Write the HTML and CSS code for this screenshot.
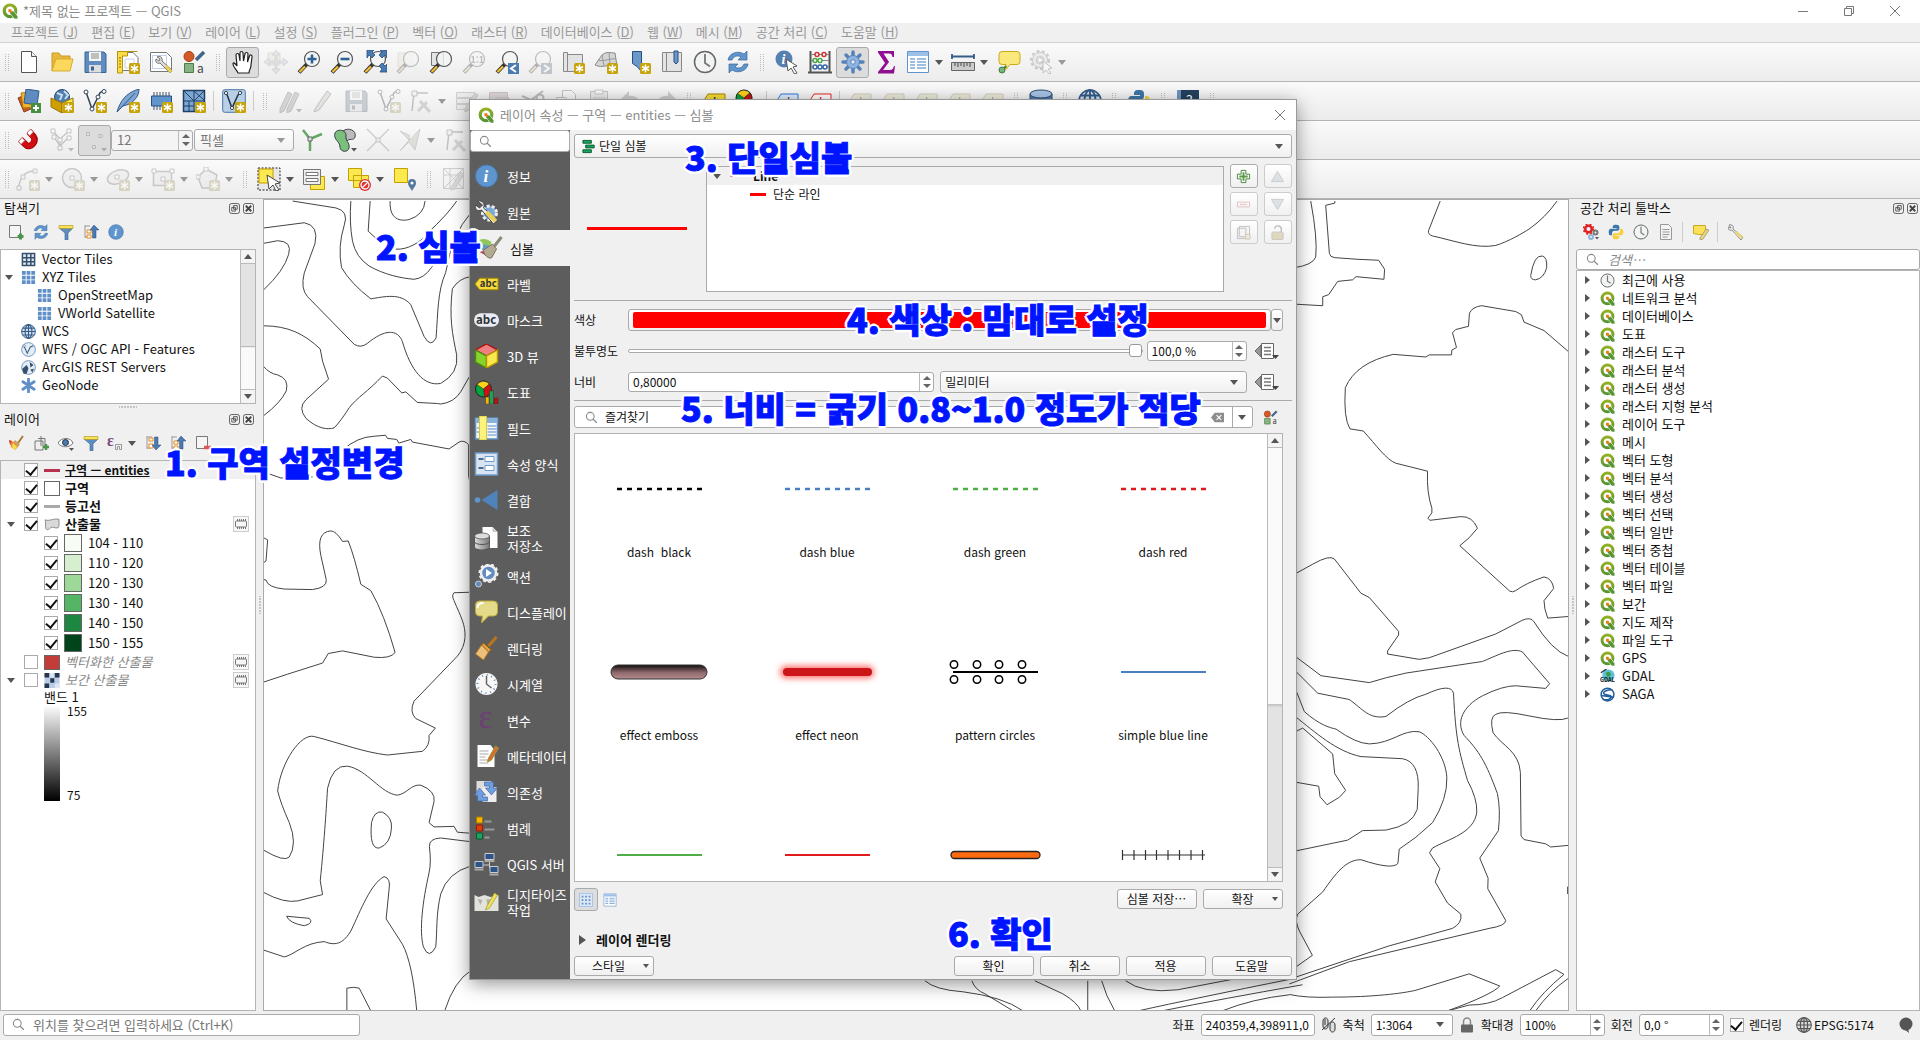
FILE: index.html
```html
<!DOCTYPE html>
<html lang="ko">

<head>
  <meta charset="UTF-8">
  <meta name="viewport" content="width=device-width, initial-scale=1.0">
  <title>*제목 없는 프로젝트 — QGIS</title>
  <link rel="stylesheet" href="styles.css">
</head>

<body>
  <!-- shared gradients and filters -->
  <svg class="defs" aria-hidden="true">
    <defs>
      <linearGradient id="g-q" x1="0" y1="0" x2="0" y2="1"><stop offset="0" stop-color="#93b023"/><stop offset="1" stop-color="#589632"/></linearGradient>
      <linearGradient id="g-emboss" x1="0" y1="0" x2="0" y2="1"><stop offset="0" stop-color="#150d0d"/><stop offset=".55" stop-color="#8f6b6e"/><stop offset="1" stop-color="#b58a8c"/></linearGradient>
      <linearGradient id="g-cyl" x1="0" y1="0" x2="1" y2="0"><stop offset="0" stop-color="#ddd"/><stop offset="1" stop-color="#777"/></linearGradient>
      <filter id="f-glow" x="-20%" y="-200%" width="140%" height="500%"><feGaussianBlur stdDeviation="3"/></filter>
    </defs>
  </svg>
  <!-- icon sprite -->
  <svg class="sprite" aria-hidden="true">
    <symbol id="qgis" viewBox="0 0 16 16"><circle cx="8" cy="7.8" r="5.8" fill="none" stroke="url(#g-q)" stroke-width="3.2"/><path d="M8 8h3.5l4.3 5.2V16h-3.2L8 10.500z" fill="#589632" stroke="#fff" stroke-width=".6"/><path d="M6.300 6.200h3l.5 3.300-3.200-.3z" fill="#ee7913"/></symbol>
    <symbol id="b-new" viewBox="0 0 24 24"><rect x="13" y="13" width="11" height="11" rx="1.500" fill="#c8a40c"/><path d="M18.500 14.500v8M15 16.500l7 4M22 16.500l-7 4" stroke="#fff" stroke-width="1.500"/></symbol>
    <symbol id="b-dd" viewBox="0 0 24 24"><path d="M18 20h6l-3 3.500z" fill="#555"/></symbol>
    <symbol id="mag" viewBox="0 0 24 24"><path d="M10 14l-8 8.500" stroke="#333" stroke-width="4"/><path d="M8 16.500l-5.500 5.500" stroke="#f7c22f" stroke-width="2.200"/><circle cx="15" cy="9" r="7.500" fill="#f3f5f5" fill-opacity=".8" stroke="#555" stroke-width="1.200"/></symbol>
    <symbol id="new" viewBox="0 0 24 24"><path d="M4.500 1.500h10l5 5v16h-15z" fill="#fff" stroke="#555"/><path d="M14.500 1.500v5h5" fill="#eee" stroke="#555"/></symbol>
    <symbol id="open" viewBox="0 0 24 24"><path d="M2 21V3h7l2 3h9v4" fill="#e6b83c" stroke="#c99b28"/><path d="M2 21l4-12h17l-3 12z" fill="#fbd85c" stroke="#d8ab32"/></symbol>
    <symbol id="save" viewBox="0 0 24 24"><path d="M2 2h19l2 2v18.500H2z" fill="#5f8cc0" stroke="#3b6493"/><path d="M6 2h12v9H6z" fill="#f6f6f6"/><path d="M8 4h8M8 6h8M8 8h8" stroke="#888"/><path d="M6 15h12v7.500H6z" fill="#ddd"/><path d="M8 16.500h3v4H8z" fill="#3b6493"/></symbol>
    <symbol id="layout" viewBox="0 0 24 24"><path d="M6 2.500h11l5 5v13H6z" fill="#fff" stroke="#777"/><path d="M1.500 1.500h20M1.500 1.500V23h5V6h5V1.500z" fill="#fadc4a" stroke="#b5920c"/><path d="M3 8h2M3 11h2M3 14h2M3 17h2" stroke="#8a6d00"/><path d="M9 9h9v9H9z" fill="#fff" stroke="#c3d0ea"/><use href="#b-new"/></symbol>
    <symbol id="layoutmgr" viewBox="0 0 24 24"><path d="M1.500 2.500h16l5 5v14h-21z" fill="#fff" stroke="#777"/><path d="M3.500 5.500h14v13h-14z" fill="none" stroke="#c3d0ea"/><path d="M8 7c3-2 6 1 5 4l10 9-2 3-10-10c-3 1-5-1-4-4l3 2 1-2z" fill="#ddd" stroke="#555" stroke-width=".8"/><path d="M17 16l5 6" stroke="#e8cf5a" stroke-width="3.500"/></symbol>
    <symbol id="style" viewBox="0 0 24 24"><circle cx="7" cy="6.500" r="5" fill="#d35a27" stroke="#a33c14"/><path d="M22 2l-8 8" stroke="#3f648f" stroke-width="3.500"/><path d="M2.500 13.500h9v9h-9z" fill="#86b286" stroke="#47803f"/><text x="15" y="22.500" font-size="12" fill="#444">a</text></symbol>
    <symbol id="hand" viewBox="0 0 24 24"><path d="M7 23c-1-3-5-6-5-9 0-2 2-1 4 2L5 5c0-2 3-2 3 0l1 6V3c0-2 3-2 3 0l.500 8L14 4c0-2 3-2 3 0l-.5 8L18.500 6c.5-2 3-1 2.500 1l-1 8c0 4-2 5-2 8z" fill="#fff" stroke="#222" stroke-width="1.200"/></symbol>
    <symbol id="pan" viewBox="0 0 24 24"><path d="M4 3h12v12H4z" fill="#efe1a2" stroke="#c7b36a"/><path d="M12 0l4 5h-3v6h6V8l5 4-5 4v-3h-6v6h3l-4 5-4-5h3v-6H5v3l-5-4 5-4v3h6V5H8z" fill="#bcc8d5" stroke="#8796a6" stroke-width=".8"/></symbol>
    <symbol id="zin" viewBox="0 0 24 24"><use href="#mag"/><path d="M15 4.500v9M10.500 9h9" stroke="#2f6194" stroke-width="2.600"/></symbol>
    <symbol id="zout" viewBox="0 0 24 24"><use href="#mag"/><path d="M10.500 9h9" stroke="#2f6194" stroke-width="2.600"/></symbol>
    <symbol id="zfull" viewBox="0 0 24 24"><use href="#mag"/><path d="M4 0h7L9 2l3 3-3 3-3-3-2 3zM24 0v8l-2-3-3 3-3-3 3-3-2-2zM24 22v-8l-2 2-3-3-3 3 3 3-2 3z" fill="#4b7ab3" stroke="#27507f" stroke-width=".8"/></symbol>
    <symbol id="zsel" viewBox="0 0 24 24"><path d="M2 3h14v14H2z" fill="#efe5a0" stroke="#bba"/><use href="#mag"/></symbol>
    <symbol id="zlay" viewBox="0 0 24 24"><path d="M2.500 2.500h12v13h-12z" fill="#e4e4e4" stroke="#777"/><use href="#mag"/></symbol>
    <symbol id="z11" viewBox="0 0 24 24"><use href="#mag"/><text x="8.500" y="12.500" font-size="9" font-weight="bold" fill="#555">1:1</text></symbol>
    <symbol id="zlast" viewBox="0 0 24 24"><use href="#mag"/><path d="M13 13h11v11H13z" fill="#4b7ab3"/><path d="M21 15l-5 3.500 5 3.500" fill="none" stroke="#fff" stroke-width="2"/></symbol>
    <symbol id="znext" viewBox="0 0 24 24"><use href="#mag"/><path d="M13 13h11v11H13z" fill="#4b7ab3"/><path d="M16 15l5 3.500-5 3.500" fill="none" stroke="#fff" stroke-width="2"/></symbol>
    <symbol id="newmap" viewBox="0 0 24 24"><path d="M2.500 2.500h4v19h-4zM6.500 4.500h15v17h-15z" fill="#e3e3e3" stroke="#888"/><use href="#b-new"/></symbol>
    <symbol id="new3d" viewBox="0 0 24 24"><path d="M1 15L8 5c5-4 8-2 13-2l2 13c-8-3-14 3-22-1z" fill="#d5d5d5" stroke="#888"/><path d="M8 5l2 11M15 3l1 12M4 10c6 2 12-2 18-1" fill="none" stroke="#999"/><use href="#b-new"/></symbol>
    <symbol id="bmnew" viewBox="0 0 24 24"><path d="M5.500 1.500h9v20l-4.500-5-4.500-3z" fill="#6b98cb" stroke="#27507f"/><use href="#b-new"/></symbol>
    <symbol id="bm" viewBox="0 0 24 24"><path d="M2.500 2.500h4v19h-4zM6.500 2.500h15v19h-15z" fill="#e3e3e3" stroke="#888"/><path d="M14 1h4v11l-2 2-2-2z" fill="#6b98cb" stroke="#27507f"/></symbol>
    <symbol id="clock" viewBox="0 0 24 24"><circle cx="12" cy="12" r="10.500" fill="#f2f4f4" stroke="#666" stroke-width="1.500"/><path d="M12 4v9l5 3.500" fill="none" stroke="#777" stroke-width="1.800"/></symbol>
    <symbol id="refresh" viewBox="0 0 24 24"><path d="M2 10C3 3 12 0 18 4l3-3v9h-9l3-3c-4-2-7-1-9 3zM22 14c-1 7-10 10-16 6l-3 3v-9h9l-3 3c4 2 7 1 9-3z" fill="#5f94cd" stroke="#37679b" stroke-width=".7"/></symbol>
    <symbol id="info" viewBox="0 0 24 24"><circle cx="12" cy="12" r="11" fill="#5f95cf" stroke="#4878ae"/><text x="9" y="17.500" font-size="17" font-style="italic" font-weight="bold" font-family="Liberation Serif" fill="#fff">i</text></symbol>
    <symbol id="ident" viewBox="0 0 24 24"><circle cx="9" cy="9" r="8.500" fill="#5580b0"/><text x="6.500" y="14" font-size="14" font-style="italic" font-weight="bold" font-family="Liberation Serif" fill="#fff">i</text><path d="M11 9l11 7-4 1 4 6-2.500 1-3.500-6-3 3z" fill="#fff" stroke="#555"/></symbol>
    <symbol id="abacus" viewBox="0 0 24 24"><path d="M2.500 1v21M21.500 1v21M0 22.500h24" stroke="#555" stroke-width="2"/><path d="M3 4.500h18M3 10.500h18M3 17h18" stroke="#888"/><g fill="#fff" stroke-width="1.500"><g stroke="#c33"><circle cx="9" cy="4.500" r="2"/><circle cx="16" cy="4.500" r="2"/></g><g stroke="#4a4"><circle cx="7" cy="10.500" r="2"/><circle cx="12" cy="10.500" r="2"/></g><g stroke="#36a"><circle cx="7" cy="17" r="2"/><circle cx="12" cy="17" r="2"/><circle cx="17" cy="17" r="2"/></g></g></symbol>
    <symbol id="gear" viewBox="0 0 24 24"><g stroke="#5583b9" stroke-width="3.500" stroke-linecap="round"><path d="M12 2v20M2 12h20M5 5l14 14M19 5L5 19"/></g><circle cx="12" cy="12" r="6.500" fill="#8db4e3" stroke="#5583b9"/><circle cx="12" cy="12" r="2.200" fill="#f2f2f2" stroke="#5583b9"/></symbol>
    <symbol id="sigma" viewBox="0 0 24 24"><path d="M4 1h16v6h-1.500C18 4 17 3.500 14 3.500H9.500L15 12 9 20h6c3 0 4-.5 5-4h1l-1 7.500H4V22l7-9L4 2.500z" fill="#900f90"/></symbol>
    <symbol id="table" viewBox="0 0 24 24"><path d="M1.500 1.500h21v21h-21z" fill="#fff" stroke="#5f94cd"/><path d="M2 2h20v4H2z" fill="#9dc0e8"/><path d="M4 9h5M4 12h5M4 15h5M4 18h5M11 9h9M11 12h9M11 15h9M11 18h9" stroke="#7fa8d6" stroke-width="1.500"/></symbol>
    <symbol id="ruler" viewBox="0 0 24 24"><path d="M1 6.500h22M1 4v5M23 4v5" stroke="#365c87" stroke-width="1.800"/><path d="M.5 12.500h23v8H.5z" fill="#ccc" stroke="#666"/><path d="M4 13v3M7 13v4M10 13v3M13 13v4M16 13v3M19 13v4" stroke="#444"/></symbol>
    <symbol id="tip" viewBox="0 0 24 24"><path d="M5 1.500h15q3 0 3 3v7q0 3-3 3h-7l-4 5v-5H5q-3 0-3-3v-7q0-3 3-3z" fill="#fbe87d" stroke="#c9ab1d"/><path d="M9 16l-5 6" stroke="#3d7f3d" stroke-width="2"/><circle cx="5" cy="20" r="3" fill="#7bb07b" stroke="#3d7f3d"/></symbol>
    <symbol id="action" viewBox="0 0 24 24"><circle cx="11" cy="10" r="9" fill="none" stroke="#777" stroke-width="2" stroke-dasharray="3 2.500"/><circle cx="11" cy="10" r="7.500" fill="#ddd" stroke="#777"/><circle cx="11" cy="10" r="4.500" fill="#999"/><path d="M9.500 7.500l4.500 2.500-4.500 2.500z" fill="#fff"/><path d="M14 11l9 7-4 1 3 4-2 1-3-4-3 3z" fill="#fff" stroke="#666"/></symbol>
    <symbol id="dsm" viewBox="0 0 24 24"><path d="M1 9l9-4 6 14-9 4z" fill="#c65a26" stroke="#8f3c12"/><path d="M4 4l11-1 2 15-11 1z" fill="#f2b42b" stroke="#ad7d10"/><path d="M9 0l13 2-2 14-13-2z" fill="#5f8cc0" stroke="#345b88"/><path d="M14 14h10v10H14z" fill="#47903f"/><path d="M19 16v6M16 19h6" stroke="#fff" stroke-width="2"/></symbol>
    <symbol id="gpkg" viewBox="0 0 24 24"><circle cx="12" cy="8" r="7.500" fill="#4f7db0" stroke="#28496e"/><path d="M7 4l5 2-2 5M14 2l4 4-3 4" fill="none" stroke="#cde" stroke-width="2"/><path d="M1 9l11 5v10L1 18z" fill="#cf9f00" stroke="#9a7500"/><path d="M23 9l-11 5v10l11-6z" fill="#fbe84d" stroke="#9a7500"/><use href="#b-new"/></symbol>
    <symbol id="shp" viewBox="0 0 24 24"><path d="M3 3l6 17L16 6q1-4 6-4" fill="none" stroke="#345" stroke-width="1.500"/><g fill="#fff" stroke="#345"><circle cx="3" cy="3" r="2"/><circle cx="9" cy="20" r="2"/><circle cx="15" cy="8" r="2"/><circle cx="21" cy="2.500" r="2"/></g></symbol>
    <symbol id="newshp" viewBox="0 0 24 24"><use href="#shp"/><use href="#b-new"/></symbol>
    <symbol id="allshp" viewBox="0 0 24 24"><path d="M3 3l7 8v10M10 11l9-8M4 9l6 9 9-9" fill="none" stroke="#666" stroke-width="1.200"/><g fill="#fff" stroke="#666"><path d="M1 1h4v4H1zM2 7h4v4H2zM8 10h4v4H8zM8 18h4v4H8zM17 1h4v4h-4zM17 8h4v4h-4z"/></g><use href="#b-dd"/></symbol>
    <symbol id="feather" viewBox="0 0 24 24"><path d="M1 23C4 13 9 4 23 0c0 8-6 15-16 17z" fill="#7da6d4" stroke="#345b88"/><path d="M1 23L19 4" stroke="#345b88"/><use href="#b-new"/></symbol>
    <symbol id="chip" viewBox="0 0 24 24"><path d="M5 3v18M8 3v18M11 3v18M14 3v18M17 3v18M20 3v18" stroke="#456"/><path d="M2.500 7h20v10h-20z" fill="#5f94cd" stroke="#27507f"/><use href="#b-new"/></symbol>
    <symbol id="mesh" viewBox="0 0 24 24"><path d="M1.500 1.500h21v21h-21z" fill="#7da6d4" stroke="#1f3f63" stroke-width="1.500"/><path d="M1 12h22M12 1v22M2 2l10 10L22 2M12 2l10 9M7 12v11M1 17h11" fill="none" stroke="#1f3f63"/><use href="#b-new"/></symbol>
    <symbol id="virt" viewBox="0 0 24 24"><rect x=".7" y=".7" width="22.600" height="22.600" rx="2" fill="#b8cfe8" stroke="#4a76a8"/><path d="M4 3l6 16 6-13 4-3" fill="none" stroke="#234" stroke-width="1.500"/><g fill="#fff" stroke="#345"><circle cx="4" cy="4" r="1.600"/><circle cx="10" cy="19" r="1.600"/><circle cx="18" cy="4" r="1.600"/></g><use href="#b-new"/></symbol>
    <symbol id="pencils" viewBox="0 0 24 24"><path d="M2 20l8-17 4 2-8 17-4 2zM9 20l8-17 4 2-8 17-4 2z" fill="#a89686" stroke="#666"/><use href="#b-dd"/></symbol>
    <symbol id="pencil" viewBox="0 0 24 24"><path d="M4 20L16 2l4 3L8 21l-5 2z" fill="#cfc5a5" stroke="#666"/></symbol>
    <symbol id="vtx" viewBox="0 0 24 24"><path d="M3 22L5 4h14" fill="none" stroke="#666" stroke-width="1.500"/><path d="M3 2h5v5H3z" fill="#eee" stroke="#666"/><path d="M9 22l9-9M11 12l10 11" stroke="#999" stroke-width="3"/></symbol>
    <symbol id="form" viewBox="0 0 24 24"><path d="M1.500 3.500h18v5h-18zM1.500 9.500h18v5h-18zM1.500 15.500h18v5h-18z" fill="#dbe5c4" stroke="#888"/><path d="M10 20L20 4l3 2-9 15-4 2z" fill="#b5a99a" stroke="#777"/></symbol>
    <symbol id="trash" viewBox="0 0 24 24"><path d="M1.500 3.500h18v14h-18z" fill="#d99" stroke="#a66"/><path d="M8 9h13l-1 14h-11z" fill="#c99" stroke="#966"/></symbol>
    <symbol id="cut" viewBox="0 0 24 24"><path d="M1 7l16 7M22 2L6 14" stroke="#555" stroke-width="2"/><circle cx="19" cy="9" r="3.500" fill="none" stroke="#555" stroke-width="2"/></symbol>
    <symbol id="copy" viewBox="0 0 24 24"><path d="M8.500 1.500h9l4 4v12h-13z" fill="#fff" stroke="#666"/><path d="M2.500 8.500h9l4 4v10h-13z" fill="#fff" stroke="#666"/></symbol>
    <symbol id="paste" viewBox="0 0 24 24"><path d="M3.500 2.500h17v20h-17z" fill="#ddd" stroke="#666"/><path d="M8 1h8v4H8zM7 9h11v12H7z" fill="#fff" stroke="#777"/></symbol>
    <symbol id="undo" viewBox="0 0 24 24"><path d="M9 2L1 10l8 8v-5c7-1 10 2 12 7 1-9-5-14-12-13z" fill="#888"/></symbol>
    <symbol id="tagy" viewBox="0 0 24 24"><path d="M1 13l5-8h17v16H6z" fill="#f7dd3a" stroke="#a58500"/><text x="6" y="16" font-size="9" font-weight="bold" fill="#333">abc</text></symbol>
    <symbol id="tagb" viewBox="0 0 24 24"><path d="M1 13l5-8h17v16H6z" fill="#dcebfb" stroke="#2d7be0"/><text x="7" y="16" font-size="9" font-weight="bold" fill="#555">ab</text></symbol>
    <symbol id="tagr" viewBox="0 0 24 24"><path d="M1 13l5-8h17v16H6z" fill="#fff" stroke="#e22"/><text x="6" y="16" font-size="9" font-weight="bold" fill="#e22">abc</text></symbol>
    <symbol id="diagram" viewBox="0 0 24 24"><circle cx="9" cy="9" r="8" fill="#00a63f" stroke="#222"/><path d="M9 9L2.500 4.500A8 8 0 0 1 15 4z" fill="#ffd21a" stroke="#333" stroke-width=".6"/><path d="M9 9l6-5a8 8 0 0 1-5 13z" fill="#c11" stroke="#333" stroke-width=".6"/><path d="M11 17h3.500v7H11z" fill="#f7b500" stroke="#333" stroke-width=".5"/><path d="M15 11h4v13h-4z" fill="#1fa055" stroke="#333" stroke-width=".5"/><path d="M19.500 18h4v6h-4z" fill="#b11" stroke="#333" stroke-width=".5"/></symbol>
    <symbol id="db" viewBox="0 0 24 24"><path d="M1 5v15c0 4 22 4 22 0V5z" fill="#4f7db0" stroke="#28496e"/><ellipse cx="12" cy="5" rx="11" ry="4" fill="#a8c5e6" stroke="#28496e"/></symbol>
    <symbol id="globe" viewBox="0 0 24 24"><circle cx="12" cy="12" r="11" fill="#cfdff0" stroke="#335a85" stroke-width="1.600"/><path d="M1 12h22M12 1v22M3 6.500h18M3 17.500h18" stroke="#335a85" stroke-width="1.800"/><ellipse cx="12" cy="12" rx="5.500" ry="11" fill="none" stroke="#335a85" stroke-width="1.800"/></symbol>
    <symbol id="python" viewBox="0 0 24 24"><path d="M12 1c-5 0-5 2-5 5h6v1H4c-4 0-4 10 0 10h2v-3c0-3 2-4 4-4h5c2 0 2-2 2-5 0-3-1-4-5-4z" fill="#3b77a8"/><path d="M12 23c5 0 5-2 5-5h-6v-1h9c4 0 4-10 0-10h-2v3c0 3-2 4-4 4H9c-2 0-2 2-2 5 0 3 1 4 5 4z" fill="#f7cf3f"/></symbol>
    <symbol id="help" viewBox="0 0 24 24"><path d="M1 1h5v22H1z" fill="#6f94c0"/><path d="M5 1h18v22H5z" fill="#24415f"/><text x="10" y="17" font-size="14" fill="#fff">?</text></symbol>
    <symbol id="magnet" viewBox="0 0 24 24"><path d="M3.500 11.500l5 5c4 5 12-3 8-8l-4.500-5" fill="none" stroke="#900" stroke-width="6.500"/><path d="M4 12l4.500 4.500c4 5 11.500-3 7.500-8L12 4" fill="none" stroke="#d00d12" stroke-width="5"/><path d="M1.500 13.500l3.500-4 3 3-4 4zM10 5l3.500-4 3 3-4 4z" fill="#fff" stroke="#a33" stroke-width=".7"/></symbol>
    <symbol id="dots3" viewBox="0 0 24 24"><path d="M3.500 4.500h3v3h-3zM16 6.500h3v3h-3zM9.500 17.500h3v3h-3z" fill="#eee" stroke="#777"/><use href="#b-dd"/></symbol>
    <symbol id="topo" viewBox="0 0 24 24"><path d="M3 2l7 9 12-5M10 11v12" fill="none" stroke="#63a863" stroke-width="2.500"/><path d="M8 9h4v4H8z" fill="#ddd" stroke="#666"/></symbol>
    <symbol id="snapx" viewBox="0 0 24 24"><path d="M10 3c5-4 14-1 12 6-1 4-6 1-8 4z" fill="#bbb" stroke="#444"/><path d="M2 5c2-5 12-3 11 3-1 5 4 6 3 12-1 5-9 4-9-1 0-6-7-7-5-14z" fill="#7cbf7c" stroke="#344"/><use href="#b-dd"/></symbol>
    <symbol id="cross" viewBox="0 0 24 24"><path d="M1 1l22 22M23 1L1 23" stroke="#888" stroke-width="1.500"/><path d="M10 10h4v4h-4z" fill="#ddd" stroke="#777"/></symbol>
    <symbol id="trace" viewBox="0 0 24 24"><path d="M2 23L11 12 2 3l9 4 1 5 10-11-5 21-6-8z" fill="#c9b68a" stroke="#888"/></symbol>
    <symbol id="curve" viewBox="0 0 24 24"><path d="M3 21C3 12 8 4 19 4" fill="none" stroke="#777" stroke-width="1.500"/><path d="M1 19h4v4H1zM5 8h4v4H5zM17 2h4v4h-4z" fill="#eee" stroke="#777"/><use href="#b-new"/></symbol>
    <symbol id="circ" viewBox="0 0 24 24"><circle cx="11" cy="11" r="9.500" fill="#dfe7df" stroke="#777" stroke-width="1.500"/><path d="M9 9h4v4H9z" fill="#fff" stroke="#777"/><use href="#b-new"/></symbol>
    <symbol id="ell" viewBox="0 0 24 24"><ellipse cx="12" cy="10" rx="11" ry="6.500" transform="rotate(-20 12 10)" fill="#dfe7df" stroke="#777" stroke-width="1.500"/><path d="M9 8h4v4H9z" fill="#fff" stroke="#777"/><use href="#b-new"/></symbol>
    <symbol id="rect" viewBox="0 0 24 24"><path d="M2.500 4.500h18v14h-18z" fill="#dfe7df" stroke="#777" stroke-width="1.500"/><path d="M1 2h4v4H1zM19 2h4v4h-4zM10 10h4v4h-4z" fill="#fff" stroke="#777"/><use href="#b-new"/></symbol>
    <symbol id="poly" viewBox="0 0 24 24"><path d="M10 2l11 6-3 13H6L2 10z" fill="#dfe7df" stroke="#777" stroke-width="1.500"/><path d="M8 0h4v4H8zM0 8h4v4H0z" fill="#fff" stroke="#777"/><use href="#b-new"/></symbol>
    <symbol id="select" viewBox="0 0 24 24"><path d="M1 1h22v22H1z" fill="#e8e8e8" stroke="#222" stroke-dasharray="2 1.500"/><path d="M2 2h14v14H2z" fill="#fce94f" stroke="#c4a000"/><path d="M10 8l13 8-5 1 4 6-3 1-3-6-4 4z" fill="#fff" stroke="#444"/></symbol>
    <symbol id="selform" viewBox="0 0 24 24"><path d="M8.500 9.500h14v13h-14z" fill="#fce94f" stroke="#c4a000"/><path d="M1.500 2.500h17v15h-17z" fill="#eee" stroke="#777"/><path d="M4 5.500h12v3H4zM4 11.500h12v3H4z" fill="#fff" stroke="#777"/></symbol>
    <symbol id="desel" viewBox="0 0 24 24"><path d="M1.500 1.500h13v12h-13zM6.500 8.500h15v12h-15z" fill="#fce94f" stroke="#c4a000"/><circle cx="18" cy="18" r="6" fill="#d33"/><circle cx="18" cy="18" r="4" fill="none" stroke="#fff" stroke-width="1.300"/><path d="M15 21l6-6" stroke="#fff" stroke-width="1.300"/></symbol>
    <symbol id="selloc" viewBox="0 0 24 24"><path d="M1.500 1.500h13v14h-13z" fill="#fce94f" stroke="#c4a000"/><path d="M19 24c-2-4-4-5-4-8a4 4 0 0 1 8 0c0 3-2 4-4 8z" fill="#527a9f"/><circle cx="19" cy="16" r="1.500" fill="#fff"/></symbol>
    <symbol id="georef" viewBox="0 0 24 24"><path d="M1.500 1.500h20v20h-20zM1.500 8h20M8 1.500v20M1.500 1.500l20 20M21 2L2 21" fill="none" stroke="#888"/><path d="M9 21L18 5l4 2-9 15-4 1z" fill="#c0a8a0" stroke="#888"/></symbol>
    <symbol id="search" viewBox="0 0 16 16"><circle cx="6.500" cy="6.500" r="4.800" fill="none" stroke="#888" stroke-width="1.300"/><path d="M10 10l4.500 4.500" stroke="#888" stroke-width="1.600"/></symbol>
    <symbol id="float" viewBox="0 0 12 12"><rect x=".5" y=".5" width="11" height="11" rx="2.500" fill="#eee" stroke="#555"/><path d="M5 2.800h4v4H5zM3 4.800h4v4H3z" fill="#eee" stroke="#555"/></symbol>
    <symbol id="close" viewBox="0 0 12 12"><rect x=".5" y=".5" width="11" height="11" rx="2.500" fill="#eee" stroke="#555"/><path d="M3 3l6 6M9 3l-6 6" stroke="#444" stroke-width="2"/></symbol>
    <symbol id="sq-add" viewBox="0 0 16 16"><path d="M1.500 1.500h11v12h-11z" fill="#f5f5f5" stroke="#777"/><path d="M12.500 9.500v6M9.500 12.500h6" stroke="#4c944c" stroke-width="3"/></symbol>
    <symbol id="sq-del" viewBox="0 0 16 16"><path d="M1.500 1.500h11v12h-11z" fill="#f5f5f5" stroke="#777"/><path d="M9 12.500h7" stroke="#d55" stroke-width="3.500"/></symbol>
    <symbol id="funnel" viewBox="0 0 16 16"><path d="M1 4h14L10 9v7H7V9z" fill="#5f8cc0" stroke="#3b6493" stroke-width=".6"/><path d="M1 1.500h14v3H1z" fill="#fbe15a" stroke="#ad9313" stroke-width=".6"/></symbol>
    <symbol id="collapse" viewBox="0 0 16 16"><path d="M2 1v13M2 2h5M2 13h4" stroke="#999" fill="none"/><path d="M4 6h4v3H4zM4 11h4v3H4z" fill="#fff" stroke="#e88a1b"/><path d="M11 1l5 5h-3v8H9.500V6H7z" fill="#4b7ab3" stroke="#27507f" stroke-width=".5"/></symbol>
    <symbol id="expand" viewBox="0 0 16 16"><path d="M2 1v13M2 2h5M2 13h4" stroke="#999" fill="none"/><path d="M4 3h4v3H4zM4 9h4v4H4z" fill="#fff" stroke="#e88a1b"/><path d="M11 15l5-5h-3V2H9.500v8H7z" fill="#4b7ab3" stroke="#27507f" stroke-width=".5"/></symbol>
    <symbol id="brushc" viewBox="0 0 16 16"><path d="M10 8l5-7" stroke="#a87c3c" stroke-width="2"/><path d="M7 5l5 4-2 3-5-4z" fill="#c9a063"/><path d="M1 5l5 2 4 5-3 3-4-3z" fill="#e8913a"/><path d="M1 5l3 1-2 4z" fill="#d23c3c"/><path d="M5 8l4 4-2 3-3-3z" fill="#f7de4d"/></symbol>
    <symbol id="group" viewBox="0 0 16 16"><path d="M2 6h8v9H2zM5 3.500h7v9" fill="#eee" stroke="#777"/><path d="M8 1v10" stroke="#777"/><path d="M13 9v6M10 12h6" stroke="#4c944c" stroke-width="2.500"/></symbol>
    <symbol id="eye" viewBox="0 0 16 16"><path d="M0 8c3-6 13-6 15 0-3 5-12 5-15 0z" fill="#fff" stroke="#777"/><circle cx="7.500" cy="7.500" r="3" fill="#4b7ab3" stroke="#234"/><path d="M11 13h5l-2.500 3z" fill="#555"/></symbol>
    <symbol id="eps" viewBox="0 0 16 16"><text x="0" y="11" font-size="16" font-weight="bold" font-family="Liberation Serif" fill="#7d4b82">ε</text><path d="M8.500 9.500h6v5M8.500 9.500v5h2v-3h2v3h2" fill="none" stroke="#999"/></symbol>
    <symbol id="grid" viewBox="0 0 16 16"><path d="M1 1h4v4H1zM6 1h4v4H6zM11 1h4v4h-4zM1 6h4v4H1zM6 6h4v4H6zM11 6h4v4h-4zM1 11h4v4H1zM6 11h4v4H6zM11 11h4v4h-4z" fill="#5f8fc6"/></symbol>
    <symbol id="gridview" viewBox="0 0 16 16"><path d="M.5.500h15v15H.5z" fill="#dce8f5" stroke="#9dc0e8"/><path d="M3 3h2v2H3zM7 3h2v2H7zM11 3h2v2h-2zM3 7h2v2H3zM7 7h2v2H7zM11 7h2v2h-2zM3 11h2v2H3zM7 11h2v2H7zM11 11h2v2h-2z" fill="#5f8fc6"/></symbol>
    <symbol id="vgrid" viewBox="0 0 16 16"><path d="M1.500 1.500h13v13h-13zM6 1v14M10.500 1v14M1 6h14M1 10.500h14" fill="#dfe8f2" stroke="#36506e" stroke-width="1.600"/></symbol>
    <symbol id="wfs" viewBox="0 0 24 24"><circle cx="12" cy="12" r="11" fill="#e3edf7" stroke="#6f93bb" stroke-width="1.500"/><path d="M5 7l5 11 5-10 5-2" fill="none" stroke="#44607e" stroke-width="1.800"/><circle cx="5" cy="6" r="2" fill="#fff" stroke="#44607e"/></symbol>
    <symbol id="arc" viewBox="0 0 24 24"><circle cx="12" cy="12" r="11" fill="#e3edf7" stroke="#6f93bb" stroke-width="1.500"/><path d="M2 14l7-6 3 5-3 9H4zM14 3l6 5-5 4zM15 15l6-1-3 6z" fill="#37506d"/></symbol>
    <symbol id="node" viewBox="0 0 16 16"><path d="M8 1v14M2 4l12 8M14 4L2 12" stroke="#5f8fc6" stroke-width="3" stroke-linecap="round"/></symbol>
    <symbol id="mem" viewBox="0 0 16 16"><rect x=".5" y=".5" width="15" height="15" fill="#f7f7f7" stroke="#ccc"/><path d="M4.500 3v10M6.500 3v10M8.500 3v10M10.500 3v10M12.500 3v10" stroke="#777"/><rect x="2.500" y="5" width="11" height="6" rx="1" fill="#f7f7f7" stroke="#777"/></symbol>
    <symbol id="polyg" viewBox="0 0 16 16"><path d="M.5 3C5 5 10 1 15.500 2.500c-.5 4 1 7-1 9-4 1-5-2-8 0-2 2-4 3-5 1C.5 9 2 6 .5 3z" fill="#d9d9d9" stroke="#888"/></symbol>
    <symbol id="raster" viewBox="0 0 13 13"><path d="M0 0h13v13H0z" fill="#b9cde6"/><path d="M0 0h4v4H0zM9 0h4v4H9zM5 4.500h3.500v4H5zM0 9h4v4H0z" fill="#26364d"/><path d="M5 0h3v4H5zM9 9h4v4H9z" fill="#dfe8f4"/></symbol>
    <symbol id="tree1" viewBox="0 0 14 16"><path d="M.5 1.500h9v3h-9zM3.500 6.500h9v3h-9zM.5 11.500h9v3h-9z" fill="#19a55c" stroke="#0b5a31"/></symbol>
    <symbol id="plus" viewBox="0 0 16 16"><path d="M5.500 1.500h5v4h4v5h-4v4h-5v-4h-4v-5h4z" fill="#fff" stroke="#4a7f3c"/><path d="M8 3.500v9M3.500 8h9" stroke="#5c9a4b" stroke-width="2"/></symbol>
    <symbol id="minus" viewBox="0 0 16 16"><path d="M1.500 5.500h13v5h-13z" fill="#fff" stroke="#c99"/><path d="M4 8h8" stroke="#daa" stroke-width="1.500"/></symbol>
    <symbol id="up" viewBox="0 0 16 16"><path d="M8 2.500l6.500 11h-13z" fill="#cdd3d9" stroke="#a9b0b8"/></symbol>
    <symbol id="down" viewBox="0 0 16 16"><path d="M8 13.500l6.500-11h-13z" fill="#cdd3d9" stroke="#a9b0b8"/></symbol>
    <symbol id="dup" viewBox="0 0 16 16"><path d="M1.500 3.500h9v11h-9zM3.500 1.500h11v11h-11z" fill="#f2f2f2" stroke="#999"/><path d="M10 10h5v5h-5z" fill="#e8e0c4" stroke="#b9b089"/></symbol>
    <symbol id="lock" viewBox="0 0 16 16"><path d="M4.500 8V4.500a3.500 3.500 0 0 1 7 0V8" fill="none" stroke="#888" stroke-width="1.500"/><rect x="2" y="7.500" width="12" height="8" rx="1" fill="#666"/></symbol>
    <symbol id="unlock" viewBox="0 0 16 16"><path d="M5 4a3.500 3.500 0 0 1 7 1v3" fill="none" stroke="#999" stroke-width="1.500"/><rect x="2" y="7.500" width="12" height="8" rx="1" fill="#d1c69c" stroke="#aaa"/></symbol>
    <symbol id="ddef" viewBox="0 0 24 18"><path d="M6 3L0 9l6 6z" fill="#999" stroke="#666"/><path d="M6.500 1.500h12v15h-12z" fill="#fff" stroke="#666"/><path d="M9 5.500h7M9 9h7M9 12.500h7" stroke="#777" stroke-width="1.500"/><path d="M17 13h7l-3.500 4z" fill="#444"/></symbol>
    <symbol id="erase" viewBox="0 0 14 12"><path d="M4 1h10v10H4L0 6z" fill="#8d8d8d"/><path d="M6 3.500l5 5M11 3.500l-5 5" stroke="#fff" stroke-width="1.300"/></symbol>
    <symbol id="wrench" viewBox="0 0 24 24"><circle cx="15" cy="13" r="7" fill="#7ba7da" stroke="#eee" stroke-width="3" stroke-dasharray="3 2"/><path d="M3 1c5-1 8 3 6 7l14 12-4 4L7 10C3 12 0 9 1 5l4 3 3-3z" fill="#eee" stroke="#444"/><path d="M12 12l9 9" stroke="#e8cf5a" stroke-width="4.500"/></symbol>
    <symbol id="tools" viewBox="0 0 16 16"><path d="M1 1c3-1 5 1 4 4l10 8-2 3L4 6C2 7 0 6 0 3l3 1z" fill="#eee" stroke="#777" stroke-width=".8"/><path d="M8 8l6 6" stroke="#ecd97a" stroke-width="3"/></symbol>
    <symbol id="paint" viewBox="0 0 24 24"><path d="M1 4q6-3 12 2l-3 8z" fill="#8fc75a"/><path d="M1 7l10 3-5 9z" fill="#5a9bd5"/><path d="M1 16l9-2 2 8z" fill="#c7365f"/><path d="M5 14l9-6 4 5-5 9c-3 1-8-3-8-8z" fill="#b3ab94" stroke="#7b745f"/><path d="M16 10l7-9" stroke="#8a8a76" stroke-width="3"/></symbol>
    <symbol id="mask" viewBox="0 0 26 16"><rect x="0" y="1" width="26" height="14" rx="7" fill="#e8ecf7"/><text x="2" y="12" font-size="12" font-weight="bold" fill="#333">abc</text></symbol>
    <symbol id="label" viewBox="0 0 26 16"><path d="M1 8l5-6h19v12H6z" fill="#f7dd3a" stroke="#a58500"/><text x="6" y="11.500" font-size="10" font-weight="bold" fill="#333">abc</text></symbol>
    <symbol id="cube" viewBox="0 0 24 24"><path d="M12 0l11 6-11 6L1 6z" fill="#f08080" stroke="#a11" stroke-width="1.400"/><path d="M1 6l11 6v12L1 18z" fill="#84d42c" stroke="#4c8a10" stroke-width="1.400"/><path d="M23 6l-11 6v12l11-6z" fill="#fbe84d" stroke="#b59500" stroke-width="1.400"/></symbol>
    <symbol id="fields" viewBox="0 0 24 24"><path d="M1 2h22v21H1z" fill="#f2f5f9" stroke="#5f8cc0" stroke-width="1.500"/><path d="M1 2h22v5H1z" fill="#8ab0dc"/><path d="M13 10h9M13 13h9M13 16h9M13 19h9M2 12h3M2 16h3" stroke="#8ab0dc" stroke-width="1.500"/><path d="M5 0h7v24H5z" fill="#fdf27c" stroke="#d8c830"/></symbol>
    <symbol id="aform" viewBox="0 0 24 24"><path d="M1 1h22v22H1z" fill="#d8e4f1" stroke="#6f9acb" stroke-width="1.500"/><path d="M10.500 4.500h9v5h-9zM10.500 13.500h9v5h-9z" fill="#fff" stroke="#6f9acb"/><path d="M4 7h5M4 16h5" stroke="#4b6a8e" stroke-width="2"/></symbol>
    <symbol id="join" viewBox="0 0 24 24"><circle cx="3" cy="12" r="2.800" fill="#5f94cd"/><path d="M23 2v20L7 12z" fill="#4f83bb"/></symbol>
    <symbol id="aux" viewBox="0 0 24 24"><path d="M8 1h10l5 5v16H8z" fill="#fff"/><path d="M18 1v5h5" fill="#ccc"/><path d="M0 10v11c0 4 15 4 15 0V10z" fill="url(#g-cyl)" stroke="#444" stroke-width=".8"/><ellipse cx="7.500" cy="10" rx="7.500" ry="3" fill="#ddd" stroke="#555" stroke-width=".8"/><path d="M0 15.500c0 4 15 4 15 0" fill="none" stroke="#555"/></symbol>
    <symbol id="act" viewBox="0 0 24 24"><circle cx="14" cy="9" r="7.500" fill="#5f8cc0" stroke="#eee" stroke-width="2.500"/><circle cx="14" cy="9" r="9" fill="none" stroke="#eee" stroke-width="2" stroke-dasharray="3 2.600"/><path d="M11.500 5l6 4-6 4z" fill="#fff"/><circle cx="4" cy="20" r="3" fill="#5f8cc0" stroke="#ccc"/></symbol>
    <symbol id="bubble" viewBox="0 0 24 24"><path d="M5 1h14q4 0 4 4v7q0 4-4 4h-5l-7 7 1-7H5q-4 0-4-4V5q0-4 4-4z" fill="#e5d98a" stroke="#bda93a"/><path d="M3 8q0-5 6-5" fill="none" stroke="#fff" stroke-width="1.800"/></symbol>
    <symbol id="broom" viewBox="0 0 24 24"><path d="M14 10l8-9" stroke="#b8761c" stroke-width="3"/><path d="M9 7l8 7-3 2-7-7z" fill="#e4a43d" stroke="#8a5510"/><path d="M7 9l7 7-5 8-8-6z" fill="#ebc07c" stroke="#b8761c"/></symbol>
    <symbol id="wclock" viewBox="0 0 24 24"><circle cx="12" cy="12" r="11" fill="#f7f7f7"/><circle cx="12" cy="12" r="9" fill="none" stroke="#6a90b8" stroke-dasharray="1 3.700" stroke-width="2"/><path d="M12 4v8l5 4" fill="none" stroke="#666" stroke-width="1.500"/></symbol>
    <symbol id="var" viewBox="0 0 24 24"><text x="4" y="20" font-size="34" font-family="Liberation Serif" fill="#6d3f77">ε</text></symbol>
    <symbol id="meta" viewBox="0 0 24 24"><path d="M3 1h13l4 5v17H3z" fill="#fff"/><path d="M5 7h9M5 10h9M5 13h6M5 16h9M5 19h9" stroke="#aaa"/><path d="M14 14l7-12 3 2-7 12-4 2z" fill="#dd6a2f" stroke="#993"/></symbol>
    <symbol id="deps" viewBox="0 0 24 24"><path d="M2 1h15v15H2z" fill="#ddd"/><path d="M8 7h14v15H8z" fill="#eee"/><path d="M10 2h9v6h4l-6 7-6-7h4V6h-5z" fill="#6f9de0" stroke="#3d68a8" stroke-width=".7"/><path d="M13 21H3v-6H0l5-7 6 7H8v2h5z" fill="#6f9de0" stroke="#3d68a8" stroke-width=".7"/></symbol>
    <symbol id="legend" viewBox="0 0 24 24"><path d="M2 1h6v6H2z" fill="#f7b500" stroke="#a57800"/><path d="M2 9h6v6H2z" fill="#e0390b" stroke="#8f2206"/><path d="M2 17h6v6H2z" fill="#19a55c" stroke="#0b5a31"/><path d="M10 5.500h7M10 13.500h10M10 21.500h5" stroke="#999" stroke-width="2"/></symbol>
    <symbol id="server" viewBox="0 0 24 24"><g fill="#2c5488" stroke="#ccc"><path d="M10.500 1.500h9v6h-9zM.5 9.500h8v6h-8zM15.500 14.500h8v6h-8z"/></g><path d="M15 8v8M9 13h6" stroke="#ccc"/><path d="M10 9h10M0 17.500h9M15 22.500h9" stroke="#aaa" stroke-width="2"/></symbol>
    <symbol id="digit" viewBox="0 0 24 24"><path d="M0 5l4 2 6-2 6 2 8-2v16H0z" fill="#e3e3de"/><path d="M3 9l5 1-2 5zM12 9l7 1-2 4-4 5z" fill="#b3b3a8"/><path d="M12 17L20 3l3 2-8 13-4 2z" fill="#f1e05a" stroke="#a89a2a" stroke-width=".7"/></symbol>
    <symbol id="gears" viewBox="0 0 16 16"><circle cx="5.500" cy="5" r="3.300" fill="none" stroke="#d22" stroke-width="2.500"/><circle cx="5.500" cy="5" r="5" fill="none" stroke="#d22" stroke-width="1.500" stroke-dasharray="2 2"/><circle cx="12.500" cy="8.500" r="2" fill="none" stroke="#777" stroke-width="2"/><circle cx="8" cy="13" r="2" fill="none" stroke="#8fb3dd" stroke-width="2"/><path d="M12 13h4l-2 2.500z" fill="#555"/></symbol>
    <symbol id="doc" viewBox="0 0 16 16"><path d="M2.500.5h8l3 3v12h-11z" fill="#f3f3f3" stroke="#999"/><path d="M4.500 5.500h7M4.500 8h7M4.500 10.500h7M4.500 13h5" stroke="#999"/></symbol>
    <symbol id="note" viewBox="0 0 16 16"><path d="M.5 1.500h12v9h-7l-5-1z" fill="#fbe15a" stroke="#c9ab1d"/><path d="M7 14l6-9 3 1-6 9-3 1z" fill="#f1d56a" stroke="#888" stroke-width=".7"/></symbol>
    <symbol id="gdal" viewBox="0 0 16 16"><circle cx="9" cy="7" r="6.500" fill="#5ac1d8"/><path d="M6 4l4-1 2 3-4 3z" fill="#3e9a3e"/><path d="M1 4l6-4" stroke="#333" stroke-width="1.500"/><text x="0" y="14" font-size="6" font-weight="bold" fill="#111">GDAL</text></symbol>
    <symbol id="saga" viewBox="0 0 16 16"><circle cx="8" cy="8" r="6.800" fill="#fff" stroke="#1f5d9c" stroke-width="1.600"/><path d="M13 3C7 3 3 5 4 7s9 1 8 4-6 3-9 2M1 9l14 2" fill="none" stroke="#1f5d9c" stroke-width="1.600"/></symbol>
    <symbol id="extent" viewBox="0 0 16 16"><path d="M2 4c0-4 5-4 5 0v5c0 4-5 4-5 0zM9 8c0-4 5-4 5 0v4c0 4-5 4-5 0z" fill="#ddd" stroke="#333"/><path d="M1 13L14 1M4 2v6" stroke="#333"/></symbol>
    <symbol id="msg" viewBox="0 0 16 16"><circle cx="8" cy="7" r="6.500" fill="#555"/><path d="M6 12l5 4-1-5z" fill="#555"/></symbol>
  </svg>

  <header class="titlebar">
    <svg class="i16"><use href="#qgis"/></svg>
    <h1>*제목 없는 프로젝트 — QGIS</h1>
    <div class="winbtns">
      <button aria-label="최소화"><svg viewBox="0 0 10 10"><path d="M0 5.500h10"/></svg></button>
      <button aria-label="이전 크기로"><svg viewBox="0 0 10 10"><path d="M.5 2.500h7v7h-7zM2.500 2.500v-2h7v7h-2"/></svg></button>
      <button aria-label="닫기"><svg viewBox="0 0 10 10"><path d="M0 0l10 10M10 0L0 10"/></svg></button>
    </div>
  </header>

  <nav class="menubar">
    <a href="#">프로젝트 (<u>J</u>)</a><a href="#">편집 (<u>E</u>)</a><a href="#">보기 (<u>V</u>)</a><a href="#">레이어 (<u>L</u>)</a><a href="#">설정 (<u>S</u>)</a><a href="#">플러그인 (<u>P</u>)</a><a href="#">벡터 (<u>O</u>)</a><a href="#">래스터 (<u>R</u>)</a><a href="#">데이터베이스 (<u>D</u>)</a><a href="#">웹 (<u>W</u>)</a><a href="#">메시 (<u>M</u>)</a><a href="#">공간 처리 (<u>C</u>)</a><a href="#">도움말 (<u>H</u>)</a>
  </nav>

  <div class="toolbar">
    <i class="grip"></i>
    <button aria-label="새 프로젝트"><svg><use href="#new"/></svg></button>
    <button aria-label="열기"><svg><use href="#open"/></svg></button>
    <button aria-label="저장"><svg><use href="#save"/></svg></button>
    <button aria-label="새 인쇄 조판"><svg><use href="#layout"/></svg></button>
    <button aria-label="조판 관리자"><svg><use href="#layoutmgr"/></svg></button>
    <button aria-label="스타일 관리자"><svg><use href="#style"/></svg></button>
    <i class="grip"></i>
    <button class="on" aria-label="지도 이동"><svg><use href="#hand"/></svg></button>
    <button disabled aria-label="선택으로 이동"><svg><use href="#pan"/></svg></button>
    <button aria-label="확대"><svg><use href="#zin"/></svg></button>
    <button aria-label="축소"><svg><use href="#zout"/></svg></button>
    <button aria-label="전체 보기"><svg><use href="#zfull"/></svg></button>
    <button disabled aria-label="선택으로 확대"><svg><use href="#zsel"/></svg></button>
    <button aria-label="레이어로 확대"><svg><use href="#zlay"/></svg></button>
    <button disabled aria-label="원해상도"><svg><use href="#z11"/></svg></button>
    <button aria-label="이전 영역"><svg><use href="#zlast"/></svg></button>
    <button disabled aria-label="다음 영역"><svg><use href="#znext"/></svg></button>
    <button aria-label="새 지도 뷰"><svg><use href="#newmap"/></svg></button>
    <button aria-label="새 3D 뷰"><svg><use href="#new3d"/></svg></button>
    <button aria-label="새 북마크"><svg><use href="#bmnew"/></svg></button>
    <button aria-label="북마크"><svg><use href="#bm"/></svg></button>
    <button aria-label="시간 제어기"><svg><use href="#clock"/></svg></button>
    <button aria-label="새로고침"><svg><use href="#refresh"/></svg></button>
    <i class="grip"></i>
    <button aria-label="객체 식별"><svg><use href="#ident"/></svg></button>
    <button aria-label="필드 계산기"><svg><use href="#abacus"/></svg></button>
    <button class="on" aria-label="툴박스"><svg><use href="#gear"/></svg></button>
    <button aria-label="통계"><svg><use href="#sigma"/></svg></button>
    <button class="drop" aria-label="속성 테이블"><svg><use href="#table"/></svg></button>
    <button class="drop" aria-label="측정"><svg><use href="#ruler"/></svg></button>
    <button aria-label="맵 도움말"><svg><use href="#tip"/></svg></button>
    <button class="drop" disabled aria-label="액션 실행"><svg><use href="#action"/></svg></button>
  </div>

  <div class="toolbar">
    <i class="grip"></i>
    <button aria-label="데이터 소스 관리자"><svg><use href="#dsm"/></svg></button>
    <button aria-label="새 지오패키지"><svg><use href="#gpkg"/></svg></button>
    <button aria-label="새 셰이프파일"><svg><use href="#newshp"/></svg></button>
    <button aria-label="새 SpatiaLite"><svg><use href="#feather"/></svg></button>
    <button aria-label="새 임시 레이어"><svg><use href="#chip"/></svg></button>
    <button aria-label="새 메시"><svg><use href="#mesh"/></svg></button>
    <i class="sep"></i>
    <button aria-label="새 가상 레이어"><svg><use href="#virt"/></svg></button>
    <i class="sep"></i><i class="grip"></i>
    <button disabled aria-label="현재 편집"><svg><use href="#pencils"/></svg></button>
    <button disabled aria-label="편집 모드"><svg><use href="#pencil"/></svg></button>
    <button disabled aria-label="편집 저장"><svg><use href="#save"/></svg></button>
    <button disabled aria-label="객체 추가"><svg><use href="#newshp"/></svg></button>
    <button class="drop" disabled aria-label="꼭짓점 도구"><svg><use href="#vtx"/></svg></button>
    <button disabled aria-label="속성 수정"><svg><use href="#form"/></svg></button>
    <button disabled aria-label="삭제"><svg><use href="#trash"/></svg></button>
    <button disabled aria-label="잘라내기"><svg><use href="#cut"/></svg></button>
    <button disabled aria-label="복사"><svg><use href="#copy"/></svg></button>
    <button disabled aria-label="붙여넣기"><svg><use href="#paste"/></svg></button>
    <button disabled aria-label="실행 취소"><svg><use href="#undo"/></svg></button>
    <button disabled class="flip" aria-label="다시 실행"><svg><use href="#undo"/></svg></button>
    <i class="grip"></i>
    <button aria-label="라벨 옵션"><svg><use href="#tagy"/></svg></button>
    <button aria-label="도표 옵션"><svg><use href="#diagram"/></svg></button>
    <i class="sep"></i>
    <button aria-label="고정 라벨"><svg><use href="#tagb"/></svg></button>
    <button aria-label="미배치 라벨"><svg><use href="#tagr"/></svg></button>
    <i class="sep"></i>
    <button disabled aria-label="라벨 고정"><svg><use href="#tagy"/></svg></button>
    <button disabled aria-label="라벨 표시"><svg><use href="#tagy"/></svg></button>
    <button disabled aria-label="라벨 이동"><svg><use href="#tagy"/></svg></button>
    <button disabled aria-label="라벨 회전"><svg><use href="#tagy"/></svg></button>
    <button disabled aria-label="라벨 변경"><svg><use href="#tagy"/></svg></button>
    <i class="grip"></i>
    <button aria-label="DB 관리자"><svg><use href="#db"/></svg></button>
    <i class="grip"></i>
    <button aria-label="메타서치"><svg><use href="#globe"/></svg></button>
    <i class="grip"></i>
    <button aria-label="파이썬 콘솔"><svg><use href="#python"/></svg></button>
    <i class="grip"></i>
    <button aria-label="도움말"><svg><use href="#help"/></svg></button>
    <i class="grip"></i>
  </div>

  <div class="toolbar">
    <i class="grip"></i>
    <button aria-label="스냅 켜기"><svg><use href="#magnet"/></svg></button>
    <button disabled aria-label="모든 레이어"><svg><use href="#allshp"/></svg></button>
    <button class="on" disabled aria-label="꼭짓점"><svg><use href="#dots3"/></svg></button>
    <div class="spin snap-tol"><input type="text" value="12" aria-label="허용 오차" disabled><i class="steps"></i></div>
    <div class="combo snap-unit"><select aria-label="단위" disabled><option>픽셀</option></select></div>
    <button aria-label="위상 편집"><svg><use href="#topo"/></svg></button>
    <button aria-label="중첩 허용"><svg><use href="#snapx"/></svg></button>
    <button disabled aria-label="교차점 스냅"><svg><use href="#cross"/></svg></button>
    <button class="drop" disabled aria-label="추적"><svg><use href="#trace"/></svg></button>
    <button disabled aria-label="자체 스냅"><svg><use href="#vtx"/></svg></button>
  </div>

  <div class="toolbar">
    <i class="grip"></i>
    <button class="drop" disabled aria-label="원호 문자열"><svg><use href="#curve"/></svg></button>
    <button class="drop" disabled aria-label="원"><svg><use href="#circ"/></svg></button>
    <button class="drop" disabled aria-label="타원"><svg><use href="#ell"/></svg></button>
    <button class="drop" disabled aria-label="직사각형"><svg><use href="#rect"/></svg></button>
    <button class="drop" disabled aria-label="정다각형"><svg><use href="#poly"/></svg></button>
    <i class="grip"></i>
    <button class="drop" aria-label="객체 선택"><svg><use href="#select"/></svg></button>
    <button class="drop" aria-label="값으로 선택"><svg><use href="#selform"/></svg></button>
    <button class="drop" aria-label="선택 해제"><svg><use href="#desel"/></svg></button>
    <button aria-label="위치로 선택"><svg><use href="#selloc"/></svg></button>
    <i class="grip"></i>
    <button disabled aria-label="고급 디지타이즈"><svg><use href="#georef"/></svg></button>
  </div>

  <main class="workspace">
    <div class="left">
      <section class="dock browser">
        <header><h2>탐색기</h2><button aria-label="띄우기"><svg><use href="#float"/></svg></button><button aria-label="닫기"><svg><use href="#close"/></svg></button></header>
        <div class="dockbar">
          <button aria-label="레이어 추가"><svg><use href="#sq-add"/></svg></button>
          <button aria-label="새로고침"><svg><use href="#refresh"/></svg></button>
          <button aria-label="필터"><svg><use href="#funnel"/></svg></button>
          <button aria-label="모두 접기"><svg><use href="#collapse"/></svg></button>
          <button aria-label="정보"><svg><use href="#info"/></svg></button>
        </div>
        <div class="box">
          <ul class="tree">
            <li><i></i><svg><use href="#vgrid"/></svg>Vector Tiles</li>
            <li><i class="tri open"></i><svg><use href="#grid"/></svg>XYZ Tiles</li>
            <li class="child"><i></i><svg><use href="#grid"/></svg>OpenStreetMap</li>
            <li class="child"><i></i><svg><use href="#grid"/></svg>VWorld Satellite</li>
            <li><i></i><svg><use href="#globe"/></svg>WCS</li>
            <li><i></i><svg><use href="#wfs"/></svg>WFS / OGC API - Features</li>
            <li><i></i><svg><use href="#arc"/></svg>ArcGIS REST Servers</li>
            <li><i></i><svg><use href="#node"/></svg>GeoNode</li>
          </ul>
          <div class="scroll low"><i class="tri up"></i><b></b><i class="tri open"></i></div>
        </div>
      </section>
      <i class="hgrip"></i>
      <section class="dock layers">
        <header><h2>레이어</h2><button aria-label="띄우기"><svg><use href="#float"/></svg></button><button aria-label="닫기"><svg><use href="#close"/></svg></button></header>
        <div class="dockbar">
          <button aria-label="스타일"><svg><use href="#brushc"/></svg></button>
          <button aria-label="그룹 추가"><svg><use href="#group"/></svg></button>
          <button aria-label="보기 관리"><svg><use href="#eye"/></svg></button>
          <button aria-label="필터"><svg><use href="#funnel"/></svg></button>
          <button class="drop" aria-label="표현식 필터"><svg><use href="#eps"/></svg></button>
          <button aria-label="모두 펼치기"><svg><use href="#expand"/></svg></button>
          <button aria-label="모두 접기"><svg><use href="#collapse"/></svg></button>
          <button aria-label="레이어 제거"><svg><use href="#sq-del"/></svg></button>
        </div>
        <div class="box">
          <ul class="toc">
            <li class="sel"><i></i><label><input type="checkbox" checked><span class="ln crimson"></span><b><u>구역 — entities</u></b></label></li>
            <li><i></i><label><input type="checkbox" checked><span class="sw white"></span><b>구역</b></label></li>
            <li><i></i><label><input type="checkbox" checked><span class="ln grey"></span><b>등고선</b></label></li>
            <li><i class="tri open"></i><label><input type="checkbox" checked><svg><use href="#polyg"/></svg><b>산출물</b></label><svg class="mem"><use href="#mem"/></svg></li>
            <li class="cls"><label><input type="checkbox" checked><span class="sw c1"></span>104 - 110</label></li>
            <li class="cls"><label><input type="checkbox" checked><span class="sw c2"></span>110 - 120</label></li>
            <li class="cls"><label><input type="checkbox" checked><span class="sw c3"></span>120 - 130</label></li>
            <li class="cls"><label><input type="checkbox" checked><span class="sw c4"></span>130 - 140</label></li>
            <li class="cls"><label><input type="checkbox" checked><span class="sw c5"></span>140 - 150</label></li>
            <li class="cls"><label><input type="checkbox" checked><span class="sw c6"></span>150 - 155</label></li>
            <li class="off"><i></i><label><input type="checkbox"><span class="sw red"></span><em>벡터화한 산출물</em></label><svg class="mem"><use href="#mem"/></svg></li>
            <li class="off"><i class="tri open"></i><label><input type="checkbox"><svg><use href="#raster"/></svg><em>보간 산출물</em></label><svg class="mem"><use href="#mem"/></svg></li>
            <li class="band">밴드 1</li>
            <li class="ramp"><span class="bar"></span><span class="ends"><span>155</span><span>75</span></span></li>
          </ul>
        </div>
      </section>
    </div>
    <i class="vgrip"></i>

    <div class="map">
      <svg viewBox="0 0 1306 812" preserveAspectRatio="xMinYMin slice" role="img" aria-label="등고선 지도">
        <!-- contours west of the dialog -->
        <g transform="translate(-23 -9) scale(.3333 .5294)">
          <path d="M155 19L285 32Q325 38 310 65Q290 105 302 145Q330 175 390 204C430 200 480 192 510 215L550 275Q570 298 586 278C592 230 590 190 615 154Q635 80 690 42"/>
          <path d="M330 19Q325 60 335 95Q345 125 385 142C430 158 480 165 520 167Q550 165 572 145L640 90"/>
          <path d="M388 19L382 76L410 92M465 110C500 112 545 95 560 80Q620 45 648 19"/>
          <path d="M448 19C445 60 490 56 505 54Q550 45 553 19"/>
          <path d="M68 70L190 60Q235 65 222 100L190 155Q178 185 200 200L340 290Q360 298 380 288C430 262 470 260 485 285C510 340 550 370 600 364Q655 345 648 310C635 270 625 240 635 185Q655 165 690 162"/>
          <path d="M68 99L110 94Q155 95 143 120Q130 150 68 187"/>
          <path d="M68 255C140 255 190 270 238 299L245 322L263 356L195 395Q170 410 195 430C230 450 260 452 280 448Q300 435 325 410C350 390 380 380 425 350L440 354L483 382L495 380L530 400L590 402L600 403Q640 400 660 380L690 347"/>
          <path d="M68 332Q85 345 110 348Q145 355 136 378Q120 400 68 425"/>
          <path d="M305 490Q350 465 400 464L434 462L440 468L468 470L474 477L510 470L515 475L625 488L655 475Q670 470 684 480L684 540L690 558"/>
          <path d="M75 533L120 543L215 541M68 656L80 660L75 700L68 703"/>
          <path d="M68 735L75 736Q80 750 130 753L215 754Q260 750 256 735L240 690Q225 645 270 643Q285 643 305 663L322 662Q340 690 360 744L390 756Q430 800 463 873Q450 885 400 882L305 870L262 875L245 893L140 914L68 929"/>
          <path d="M690 759L640 760Q632 765 640 775C660 805 675 820 673 845Q670 865 650 880L520 965Q505 985 525 998L584 1016L565 1030Q568 1050 545 1060L440 1067C370 1062 300 1045 220 1032C180 1025 120 1080 110 1135Q120 1160 145 1195Q170 1235 145 1260Q130 1270 68 1247"/>
          <path d="M68 1327Q130 1348 170 1343L245 1331L238 1305C250 1230 255 1180 260 1130Q275 1085 320 1088C380 1095 420 1140 470 1143C500 1140 510 1122 540 1124Q585 1135 580 1155L565 1195L580 1203L640 1202L650 1213L690 1215"/>
          <path d="M392 1195Q400 1172 425 1175Q455 1185 452 1205Q450 1235 415 1243Q385 1245 392 1195z"/>
          <path d="M690 1231L600 1224Q565 1225 566 1240Q572 1270 565 1290C545 1345 535 1400 548 1430Q565 1455 585 1430C590 1400 585 1370 600 1330Q620 1290 690 1277"/>
          <path d="M68 1436L130 1449C160 1445 190 1422 250 1420C290 1430 310 1420 330 1400C360 1360 390 1310 430 1297Q450 1300 445 1320L436 1377L485 1425Q515 1460 528 1551"/>
          <path d="M137 1372L205 1376Q220 1385 190 1390Q145 1385 137 1372zM318 1551V1508Q340 1505 355 1508L390 1551M612 1551Q640 1495 690 1475"/>
        </g>
        <!-- contours east of the dialog -->
        <g transform="translate(1027 -9) scale(.3333 .5294)">
          <path d="M64 19Q85 90 79 125Q70 140 15 145"/>
          <path d="M137 19L136 23L109 27L120 118Q122 125 135 126L200 129L268 131L286 148L284 167L200 162L190 168L145 171L118 196L100 200V217L15 214"/>
          <path d="M453 19L418 75Q415 82 430 85C490 93 560 110 620 103C660 95 700 80 720 72Q770 50 804 19"/>
          <path d="M725 160Q735 120 760 123Q775 125 773 145Q765 165 740 168Q725 168 725 160z"/>
          <path d="M837 303L765 264L705 248L697 234L680 228L578 217Q550 219 541 231L538 256L500 262L490 268L502 296L488 301L487 310L420 310L410 314L312 309Q200 325 168 372Q162 430 182 450L222 454C260 480 290 508 320 515L415 530Q412 570 428 600V609L416 619L422 623L515 616Q550 615 565 638L540 656L512 671L662 757Q670 760 680 756Q710 742 765 730Q790 733 794 752L765 775Q765 790 776 808L837 805"/>
          <path d="M15 725L70 706Q120 688 135 696L215 761L240 769L328 833V840L295 870V876L390 886L420 883L620 838L700 812Q725 805 735 815Q790 870 837 880"/>
          <path d="M15 879L95 917L240 930Q290 920 350 912L580 890C620 880 670 862 700 872L782 932L770 941L680 936Q640 936 580 955C520 975 500 1005 525 1030C570 1060 590 1080 625 1140Q635 1170 628 1210L572 1262L597 1300L596 1320L650 1380Q650 1390 600 1395L180 1458L0 1500"/>
          <path d="M15 906L85 950L180 962C220 980 240 1000 290 994Q360 960 410 952Q485 930 493 950C500 1040 510 1060 535 1115Q565 1150 563 1175C555 1215 480 1225 430 1243L421 1252L452 1282L438 1307L475 1347L515 1368Q520 1385 490 1395L300 1428L15 1488"/>
          <path d="M15 937L45 985C90 1010 120 1015 140 1018Q200 1045 240 1046C310 1045 340 1018 390 1023C420 1030 470 1070 473 1110Q475 1150 430 1195Q380 1225 330 1245L326 1272Q310 1285 215 1265C170 1265 140 1290 100 1326L25 1368Q15 1380 30 1400L69 1446L15 1470"/>
          <path d="M15 993C80 1025 140 1060 215 1070L340 1074Q390 1080 387 1130L384 1170Q370 1200 290 1209L220 1210L175 1228L15 1249"/>
          <path d="M15 1024L40 1016L130 1065L136 1102L169 1134L150 1147L113 1161L92 1146L88 1126L15 1118"/>
          <path d="M837 997Q810 1005 720 993Q640 982 620 990Q600 995 612 1025C640 1050 690 1060 694 1100L696 1220L705 1227L770 1235L785 1241L837 1238M836 1316v14"/>
          <path d="M0 1520Q50 1527 130 1525C250 1525 340 1518 380 1512L540 1481L632 1504Q610 1520 475 1551L540 1540Q600 1540 640 1526L800 1473L825 1482Q760 1515 722 1551M837 1490Q780 1515 740 1551"/>
        </g>
        <!-- strip under the dialog -->
        <path d="M662 782Q672 791 700 793Q740 798 760 812M709 782Q712 791 722 795L750 812M772 782L800 795Q815 804 818 812M825 782V812M839 782Q843 797 852 812M863 782Q880 795 915 791Q970 780 1030 770M876 812Q930 800 1030 780M900 812Q960 800 1040 786M1027 796Q990 800 960 812"/>
      </svg>
    </div>
    <i class="vgrip"></i>

    <section class="dock toolbox">
      <header><h2>공간 처리 툴박스</h2><button aria-label="띄우기"><svg><use href="#float"/></svg></button><button aria-label="닫기"><svg><use href="#close"/></svg></button></header>
      <div class="dockbar">
        <button aria-label="모델"><svg><use href="#gears"/></svg></button>
        <button aria-label="스크립트"><svg><use href="#python"/></svg></button>
        <button aria-label="이력"><svg><use href="#clock"/></svg></button>
        <button aria-label="결과 뷰어"><svg><use href="#doc"/></svg></button>
        <i class="sep"></i>
        <button aria-label="제자리 편집"><svg><use href="#note"/></svg></button>
        <i class="sep"></i>
        <button aria-label="옵션"><svg><use href="#tools"/></svg></button>
      </div>
      <div class="field find"><svg><use href="#search"/></svg><input type="text" placeholder="검색…" aria-label="검색"></div>
      <div class="box">
        <ul class="tree">
          <li><i class="tri"></i><svg><use href="#clock"/></svg>최근에 사용</li>
          <li><i class="tri"></i><svg><use href="#qgis"/></svg>네트워크 분석</li>
          <li><i class="tri"></i><svg><use href="#qgis"/></svg>데이터베이스</li>
          <li><i class="tri"></i><svg><use href="#qgis"/></svg>도표</li>
          <li><i class="tri"></i><svg><use href="#qgis"/></svg>래스터 도구</li>
          <li><i class="tri"></i><svg><use href="#qgis"/></svg>래스터 분석</li>
          <li><i class="tri"></i><svg><use href="#qgis"/></svg>래스터 생성</li>
          <li><i class="tri"></i><svg><use href="#qgis"/></svg>래스터 지형 분석</li>
          <li><i class="tri"></i><svg><use href="#qgis"/></svg>레이어 도구</li>
          <li><i class="tri"></i><svg><use href="#qgis"/></svg>메시</li>
          <li><i class="tri"></i><svg><use href="#qgis"/></svg>벡터 도형</li>
          <li><i class="tri"></i><svg><use href="#qgis"/></svg>벡터 분석</li>
          <li><i class="tri"></i><svg><use href="#qgis"/></svg>벡터 생성</li>
          <li><i class="tri"></i><svg><use href="#qgis"/></svg>벡터 선택</li>
          <li><i class="tri"></i><svg><use href="#qgis"/></svg>벡터 일반</li>
          <li><i class="tri"></i><svg><use href="#qgis"/></svg>벡터 중첩</li>
          <li><i class="tri"></i><svg><use href="#qgis"/></svg>벡터 테이블</li>
          <li><i class="tri"></i><svg><use href="#qgis"/></svg>벡터 파일</li>
          <li><i class="tri"></i><svg><use href="#qgis"/></svg>보간</li>
          <li><i class="tri"></i><svg><use href="#qgis"/></svg>지도 제작</li>
          <li><i class="tri"></i><svg><use href="#qgis"/></svg>파일 도구</li>
          <li><i class="tri"></i><svg><use href="#qgis"/></svg>GPS</li>
          <li><i class="tri"></i><svg><use href="#gdal"/></svg>GDAL</li>
          <li><i class="tri"></i><svg><use href="#saga"/></svg>SAGA</li>
        </ul>
      </div>
    </section>
  </main>

  <footer class="statusbar">
    <div class="field locator"><svg><use href="#search"/></svg><input type="text" placeholder="위치를 찾으려면 입력하세요 (Ctrl+K)" aria-label="위치 탐색"></div>
    <label for="coord">좌표</label>
    <div class="field coord"><input type="text" id="coord" value="240359,4,398911,0"></div>
    <button aria-label="영역 토글"><svg><use href="#extent"/></svg></button>
    <label for="scale">축척</label>
    <div class="combo scale"><select id="scale"><option>1:3064</option></select></div>
    <button aria-label="축척 잠금"><svg><use href="#lock"/></svg></button>
    <label for="zoom">확대경</label>
    <div class="spin magn"><input type="text" id="zoom" value="100%"><i class="steps"></i></div>
    <label for="rot">회전</label>
    <div class="spin magn"><input type="text" id="rot" value="0,0 °"><i class="steps"></i></div>
    <label class="render"><input type="checkbox" checked>렌더링</label>
    <button class="crs"><svg><use href="#globe"/></svg>EPSG:5174</button>
    <button class="log" aria-label="메시지"><svg><use href="#msg"/></svg></button>
  </footer>

  <section class="dialog" role="dialog" aria-labelledby="dlg-title">
    <header>
      <svg class="i16"><use href="#qgis"/></svg>
      <h2 id="dlg-title">레이어 속성 — 구역 — entities — 심볼</h2>
      <button aria-label="닫기"><svg viewBox="0 0 10 10"><path d="M0 0l10 10M10 0L0 10"/></svg></button>
    </header>
    <div class="dlg-body">
      <aside>
        <div class="field"><svg><use href="#search"/></svg><input type="text" aria-label="옵션 검색"></div>
        <nav>
          <a href="#"><svg><use href="#info"/></svg>정보</a>
          <a href="#"><svg><use href="#wrench"/></svg>원본</a>
          <a href="#" class="current"><svg><use href="#paint"/></svg>심볼</a>
          <a href="#"><svg><use href="#label"/></svg>라벨</a>
          <a href="#"><svg><use href="#mask"/></svg>마스크</a>
          <a href="#"><svg><use href="#cube"/></svg>3D 뷰</a>
          <a href="#"><svg><use href="#diagram"/></svg>도표</a>
          <a href="#"><svg><use href="#fields"/></svg>필드</a>
          <a href="#"><svg><use href="#aform"/></svg>속성 양식</a>
          <a href="#"><svg><use href="#join"/></svg>결합</a>
          <a href="#" class="two"><svg><use href="#aux"/></svg>보조<br>저장소</a>
          <a href="#"><svg><use href="#act"/></svg>액션</a>
          <a href="#"><svg><use href="#bubble"/></svg>디스플레이</a>
          <a href="#"><svg><use href="#broom"/></svg>렌더링</a>
          <a href="#"><svg><use href="#wclock"/></svg>시계열</a>
          <a href="#"><svg><use href="#var"/></svg>변수</a>
          <a href="#"><svg><use href="#meta"/></svg>메타데이터</a>
          <a href="#"><svg><use href="#deps"/></svg>의존성</a>
          <a href="#"><svg><use href="#legend"/></svg>범례</a>
          <a href="#"><svg><use href="#server"/></svg>QGIS 서버</a>
          <a href="#" class="two"><svg><use href="#digit"/></svg>디지타이즈<br>작업</a>
        </nav>
      </aside>

      <div class="pane">
        <div class="combo renderer"><svg><use href="#tree1"/></svg><select aria-label="렌더러"><option>단일 심볼</option></select></div>

        <div class="symbol">
          <div class="preview"><span></span></div>
          <ul class="sym-tree">
            <li><i class="tri open"></i><span class="ln thin"></span><b>Line</b></li>
            <li class="sub"><span class="ln"></span>단순 라인</li>
          </ul>
          <div class="sym-btns">
            <button aria-label="심볼 레이어 추가"><svg><use href="#plus"/></svg></button>
            <button disabled aria-label="위로"><svg><use href="#up"/></svg></button>
            <button disabled aria-label="제거"><svg><use href="#minus"/></svg></button>
            <button disabled aria-label="아래로"><svg><use href="#down"/></svg></button>
            <button disabled aria-label="복제"><svg><use href="#dup"/></svg></button>
            <button disabled aria-label="잠금"><svg><use href="#unlock"/></svg></button>
          </div>
        </div>

        <div class="props">
          <div class="row">
            <label for="color">색상</label>
            <button class="color" id="color" aria-label="색상"><span></span></button><button class="color-dd" aria-label="색상 메뉴"><i class="tri open"></i></button>
          </div>
          <div class="row">
            <label for="opacity">불투명도</label>
            <input type="range" id="opacity" value="100">
            <div class="spin pct"><input type="text" value="100,0 %" aria-label="불투명도 값"><i class="steps"></i></div>
            <button class="ddef" aria-label="데이터 정의"><svg><use href="#ddef"/></svg></button>
          </div>
          <div class="row">
            <label for="width">너비</label>
            <div class="spin wide"><input type="text" id="width" value="0,80000"><i class="steps"></i></div>
            <div class="combo wide"><select aria-label="너비 단위"><option>밀리미터</option></select></div>
            <button class="ddef" aria-label="데이터 정의"><svg><use href="#ddef"/></svg></button>
          </div>
        </div>

        <div class="filter">
          <div class="field"><svg><use href="#search"/></svg><input type="text" value="즐겨찾기" aria-label="심볼 필터"><button aria-label="지우기"><svg><use href="#erase"/></svg></button><button class="dd" aria-label="그룹 목록"><i class="tri open"></i></button></div>
          <button class="stylemgr" aria-label="스타일 관리자"><svg><use href="#style"/></svg></button>
        </div>

        <div class="box gallery">
          <ul>
            <li><svg viewBox="0 0 168 110"><path d="M42 55h85" stroke="#000" stroke-width="2.500" stroke-dasharray="5 5"/></svg>dash&nbsp; black</li>
            <li><svg viewBox="0 0 168 110"><path d="M42 55h85" stroke="#4a7fbd" stroke-width="2.500" stroke-dasharray="5 5"/></svg>dash blue</li>
            <li><svg viewBox="0 0 168 110"><path d="M42 55h85" stroke="#4fae46" stroke-width="2.500" stroke-dasharray="5 5"/></svg>dash green</li>
            <li><svg viewBox="0 0 168 110"><path d="M42 55h85" stroke="#e31a1c" stroke-width="2.500" stroke-dasharray="5 5"/></svg>dash red</li>
            <li><svg viewBox="0 0 168 110"><rect x="36" y="48" width="96" height="14" rx="7" fill="url(#g-emboss)" stroke="#333"/></svg>effect emboss</li>
            <li><svg viewBox="0 0 168 110"><rect x="37" y="49" width="94" height="12" rx="6" fill="#f66" filter="url(#f-glow)"/><rect x="40" y="51" width="89" height="8" rx="4" fill="#cc1518"/></svg>effect neon</li>
            <li><svg viewBox="0 0 168 110"><path d="M42 55h85" stroke="#000" stroke-width="2"/><g fill="#fff" stroke="#000" stroke-width="1.500"><circle cx="43" cy="47.500" r="3.700"/><circle cx="66" cy="47.500" r="3.700"/><circle cx="88" cy="47.500" r="3.700"/><circle cx="111" cy="47.500" r="3.700"/><circle cx="43" cy="62.500" r="3.700"/><circle cx="66" cy="62.500" r="3.700"/><circle cx="88" cy="62.500" r="3.700"/><circle cx="111" cy="62.500" r="3.700"/></g></svg>pattern circles</li>
            <li><svg viewBox="0 0 168 110"><path d="M42 55h85" stroke="#4a7fbd" stroke-width="2"/></svg>simple blue line</li>
            <li><svg viewBox="0 0 168 110"><path d="M42 55h85" stroke="#4fae46" stroke-width="2"/></svg></li>
            <li><svg viewBox="0 0 168 110"><path d="M42 55h85" stroke="#e31a1c" stroke-width="2"/></svg></li>
            <li><svg viewBox="0 0 168 110"><rect x="40" y="51.500" width="89" height="7" rx="3.500" fill="#ff6a0f" stroke="#222" stroke-width="1.300"/></svg></li>
            <li><svg viewBox="0 0 168 110"><path d="M43 55h83M43.500 50v10M55 50v10M66.500 50v10M77.500 50v10M89 50v10M100.500 50v10M112 50v10M123.500 50v10" stroke="#333" stroke-width="1.200"/></svg></li>
          </ul>
          <div class="scroll"><i class="tri up"></i><b></b><i class="tri open"></i></div>
        </div>

        <div class="viewrow">
          <button class="view on" aria-label="아이콘 보기"><svg><use href="#gridview"/></svg></button>
          <button class="view" aria-label="목록 보기"><svg><use href="#table"/></svg></button>
          <button class="push first">심볼 저장…</button>
          <button class="push menu">확장<i class="tri open"></i></button>
        </div>

        <h3><i class="tri"></i>레이어 렌더링</h3>

        <div class="actions">
          <button class="push menu">스타일<i class="tri open"></i></button>
          <button class="push first">확인</button>
          <button class="push">취소</button>
          <button class="push">적용</button>
          <button class="push">도움말</button>
        </div>
      </div>
    </div>
  </section>

  <!-- tutorial steps written over the window -->
  <p class="step s1">1. 구역 설정변경</p>
  <p class="step s2">2. 심볼</p>
  <p class="step s3">3. 단일심볼</p>
  <p class="step s4">4. 색상 : 맘대로 설정</p>
  <p class="step s5">5. 너비 = 굵기 0.8~1.0 정도가 적당</p>
  <p class="step s6">6. 확인</p>
</body>

</html>
```
FILE: styles.css
```css
* {
  box-sizing: border-box;
  margin: 0;
  padding: 0;
}
body {
  position: relative;
  display: flex;
  flex-direction: column;
  height: 100vh;
  overflow: hidden;
  background: #f0f0f0;
  color: #111;
  font: 13px/18px "Noto Sans CJK KR", "Noto Sans", sans-serif;
}
h1, h2, h3 {
  font-size: 13px;
  font-weight: normal;
}
ul {
  list-style: none;
}
a {
  color: inherit;
  text-decoration: none;
}
button, input, select {
  font: inherit;
  color: inherit;
}
button {
  display: flex;
  align-items: center;
  justify-content: center;
  border: 0;
  background: none;
}
svg, i {
  flex: none;
}
.defs {
  position: absolute;
  width: 0;
  height: 0;
}
.sprite {
  display: none;
}
.i16 {
  width: 16px;
  height: 16px;
}

/* title and menu */
.titlebar {
  display: flex;
  align-items: center;
  height: 23px;
  padding: 0 2px 1px;
  background: #fff;
  color: #8c8c8c;
}
.titlebar h1 {
  flex: 1;
  padding-left: 5px;
}
.winbtns {
  display: flex;
}
.winbtns button {
  width: 46px;
  height: 22px;
}
.winbtns svg, .dialog > header button svg {
  width: 10px;
  height: 10px;
  fill: none;
  stroke: #777;
}
.menubar {
  display: flex;
  gap: 13px;
  height: 20px;
  padding-left: 11px;
  border-bottom: 1px solid #d2d2d2;
  color: #999;
  white-space: nowrap;
}

/* toolbars */
.toolbar {
  display: flex;
  align-items: center;
  height: 39px;
  border-bottom: 1px solid #b4b4b4;
  background: linear-gradient(#fafafa, #ececec);
}
.toolbar > button {
  width: 33px;
  height: 31px;
  border: 1px solid transparent;
  border-radius: 3px;
}
.toolbar > button svg {
  width: 24px;
  height: 24px;
}
.toolbar > button.on {
  border-color: #aaa;
  background: #dcdcdc;
}
.toolbar > button:disabled svg {
  opacity: 0.35;
  filter: grayscale(0.7);
}
.toolbar > .flip svg {
  transform: scaleX(-1);
}
.toolbar > button.drop {
  width: 45px;
}
.drop::after {
  content: "";
  margin-left: 5px;
  border: 4px solid transparent;
  border-top: 5px solid #555;
  border-bottom: 0;
}
.drop:disabled::after {
  border-top-color: #999;
}
.grip {
  width: 4px;
  height: 17px;
  margin: 0 6px;
  border: dotted #bbb;
  border-width: 0 1px;
}
.grip:first-child {
  margin: 0 3px 0 5px;
}
.sep {
  width: 1px;
  height: 20px;
  margin: 0 3px;
  background: #ccc;
}

/* form controls */
.field, .spin, .combo {
  display: flex;
  align-items: center;
  border: 1px solid #aaa;
  border-radius: 3px;
  background: #fff;
}
.field svg {
  width: 13px;
  height: 13px;
}
input[type="text"], select {
  flex: 1;
  width: 100%;
  min-width: 0;
  height: 18px;
  border: 0;
  outline: 0;
  background: transparent;
}
select {
  appearance: none;
  opacity: 1;
}
.combo {
  background: linear-gradient(#fff, #f0f0f0);
}
.combo::after {
  content: "";
  margin: 0 8px;
  border: 4px solid transparent;
  border-top: 5px solid #555;
  border-bottom: 0;
}
.steps {
  display: flex;
  flex-direction: column;
  align-items: center;
  justify-content: center;
  gap: 4px;
  align-self: stretch;
  width: 14px;
  border-left: 1px solid #bbb;
}
.steps::before, .steps::after {
  content: "";
  border: 4px solid transparent;
}
.steps::before {
  border-top: 0;
  border-bottom: 4px solid #666;
}
.steps::after {
  border-bottom: 0;
  border-top: 4px solid #666;
}
.snap-tol {
  width: 82px;
  height: 21px;
  padding-left: 5px;
  color: #777;
  background: #f4f4f4;
}
.snap-unit {
  width: 100px;
  height: 22px;
  margin: 0 1px;
  padding-left: 5px;
  color: #777;
}
.snap-unit::after {
  border-top-color: #999;
}
input[type="checkbox"] {
  display: flex;
  justify-content: center;
  flex: none;
  appearance: none;
  width: 14px;
  height: 14px;
  border: 1px solid #aaa;
  background: #fff;
}
input[type="checkbox"]:checked::after {
  content: "";
  width: 5px;
  height: 9px;
  border: solid #111;
  border-width: 0 2px 2px 0;
  transform: rotate(40deg);
}
input[type="range"] {
  flex: 1;
  min-width: 0;
  height: 18px;
  margin-right: 4px;
  appearance: none;
  background: transparent;
}
input[type="range"]::-webkit-slider-runnable-track {
  height: 4px;
  border: 1px solid #aaa;
  border-radius: 2px;
  background: #fff;
}
input[type="range"]::-webkit-slider-thumb {
  appearance: none;
  width: 13px;
  height: 13px;
  margin-top: -6px;
  border: 1px solid #999;
  border-radius: 3px;
  background: #fff;
}

/* triangles */
.tri {
  border: 4px solid transparent;
  border-left: 5px solid #555;
  border-right: 0;
}
.tri.open {
  border: 4px solid transparent;
  border-top: 5px solid #555;
  border-bottom: 0;
}
.tri.up {
  border: 4px solid transparent;
  border-bottom: 5px solid #555;
  border-top: 0;
}

/* docks */
.workspace {
  display: flex;
  flex: 1;
  min-height: 0;
}
.left {
  display: flex;
  flex-direction: column;
  width: 256px;
}
.dock {
  display: flex;
  flex-direction: column;
}
.dock > header {
  display: flex;
  align-items: center;
  gap: 2px;
  height: 18px;
  padding: 0 2px 0 4px;
}
.dock > header h2 {
  flex: 1;
}
.dock > header svg {
  width: 11px;
  height: 11px;
}
.dock > header button {
  width: 12px;
}
.dockbar {
  display: flex;
  align-items: center;
  height: 30px;
  margin-bottom: 2px;
  padding-left: 3px;
}
.dockbar button {
  width: 25px;
  height: 24px;
}
.dockbar button.drop {
  width: 37px;
}
.dockbar svg {
  width: 16px;
  height: 16px;
}
.dockbar .sep {
  margin: 0 5px 0 4px;
}
.box {
  display: flex;
  border: 1px solid #b4b4b4;
  background: #fff;
}
.browser .box {
  height: 155px;
}
.layers {
  flex: 1;
}
.layers .box, .toolbox .box {
  flex: 1;
}
.hgrip {
  align-self: center;
  width: 18px;
  height: 6px;
  background: radial-gradient(#999 1px, transparent 1px) center / 3px 4px repeat-x;
}
.vgrip {
  align-self: center;
  width: 7px;
  height: 18px;
  background: radial-gradient(#999 1px, transparent 1px) center / 4px 3px repeat-y;
}
.tree {
  flex: 1;
}
.tree li {
  display: flex;
  align-items: center;
  height: 18px;
}
.tree li > i {
  width: 8px;
  margin: 0 10px 0 4px;
}
.tree li > i:not(.open).tri {
  width: 5px;
  margin: 0 13px 0 8px;
}
.tree svg {
  width: 15px;
  height: 15px;
  margin: 0 7px 0 -3px;
}
.tree .child {
  padding-left: 16px;
}
.browser .tree svg {
  margin-left: -2px;
  margin-right: 6px;
}
.scroll {
  display: flex;
  flex-direction: column;
  align-items: center;
  width: 15px;
  border-left: 1px solid #bbb;
  background: #f4f4f4;
}
.scroll i {
  box-sizing: content-box;
  margin: 4px 0;
}
.scroll b {
  flex: 1;
  width: 100%;
  border: solid #bbb;
  border-width: 1px 0;
  background: linear-gradient(#fafafa 61%, #bbb 61%, #e3e3e3 62%);
}
.scroll.low b {
  background: linear-gradient(#e3e3e3 66%, #bbb 66%, #fafafa 67%);
}
.toc {
  flex: 1;
}
.toc li {
  display: flex;
  align-items: center;
  height: 18px;
}
.toc li > i {
  width: 8px;
  margin: 0 9px 0 6px;
}
.toc label {
  display: flex;
  align-items: center;
  flex: 1;
}
.toc .sel {
  background: #f0f0f0;
}
.toc .sel b {
  font-size: 12px;
}
.toc label > span, .toc label > svg {
  flex: none;
  width: 16px;
  height: 15px;
  margin: 0 5px 0 6px;
}
.toc li .ln {
  height: 3px;
}
.toc .grey {
  height: 2px;
  background: #aaa;
}
.toc .crimson {
  background: #b8324f;
}
.sw {
  border: 1px solid #666;
}
.sw.red {
  background: #c33c38;
}
.toc .cls {
  height: 20px;
  padding-left: 43px;
}
.toc .cls .sw {
  width: 18px;
  height: 18px;
  margin-right: 6px;
}
.c1 { background: #f7fcf5; }
.c2 { background: #d5efcf; }
.c3 { background: #9ed898; }
.c4 { background: #54b567; }
.c5 { background: #1d8641; }
.c6 { background: #00441b; }
.toc .off {
  color: #888;
}
.mem {
  width: 16px;
  height: 16px;
  margin-right: 6px;
}
.toc .band {
  padding-left: 43px;
  height: 16px;
}
.toc .ramp {
  align-items: stretch;
  height: 96px;
  padding-left: 43px;
  font-size: 12px;
  line-height: 12px;
}
.bar {
  width: 16px;
  background: linear-gradient(#fff, #000);
}
.ends {
  display: flex;
  flex-direction: column;
  justify-content: space-between;
  padding-left: 7px;
}
.toolbox {
  width: 344px;
}
.toolbox .dockbar {
  padding-left: 2px;
}
.find {
  height: 21px;
  padding-left: 9px;
}
.find input {
  padding-left: 9px;
}
.find input::placeholder {
  color: #888;
  font-style: italic;
}

/* map canvas */
.map {
  flex: 1;
  min-width: 0;
  border: 1px solid #aaa;
  background: #fff;
}
.map svg {
  display: block;
  width: 100%;
  height: 100%;
}
.map path {
  fill: none;
  stroke: #444;
  vector-effect: non-scaling-stroke;
}

/* status bar */
.statusbar {
  display: flex;
  align-items: center;
  gap: 6px;
  height: 29px;
  padding: 0 6px 2px 3px;
  font-size: 12px;
  white-space: nowrap;
}
.statusbar svg {
  width: 16px;
  height: 16px;
}
.statusbar .field, .statusbar .spin, .statusbar .combo {
  height: 22px;
  padding-left: 4px;
  background: #fff;
}
.statusbar .locator {
  width: 357px;
  margin-right: auto;
  padding-left: 8px;
  font-size: 13px;
}
.statusbar .locator svg {
  width: 13px;
  height: 13px;
}
.locator input {
  padding-left: 8px;
}
.locator input::placeholder {
  color: #777;
}
.coord {
  width: 114px;
}
.scale {
  width: 82px;
}
.magn {
  width: 85px;
}
.render {
  display: flex;
  align-items: center;
  gap: 5px;
}
.crs {
  gap: 2px;
  margin-left: 8px;
}
.crs svg {
  filter: grayscale(1);
}
.log {
  margin-left: 18px;
}

/* layer properties dialog */
.dialog {
  position: absolute;
  top: 100px;
  bottom: 61px;
  left: 470px;
  display: flex;
  flex-direction: column;
  width: 43%;
  background: #f0f0f0;
  box-shadow: 0 0 0 1px #999, 0 4px 18px rgba(0, 0, 0, 0.45);
}
.dialog > header {
  display: flex;
  align-items: center;
  gap: 6px;
  height: 30px;
  padding-left: 8px;
  background: #fff;
  color: #8c8c8c;
}
.dialog > header h2 {
  flex: 1;
}
.dialog > header button {
  width: 32px;
  height: 30px;
}
.dlg-body {
  display: flex;
  flex: 1;
  min-height: 0;
}
aside {
  width: 100px;
  background: #5d5d5d;
  color: #fff;
}
aside .field {
  height: 22px;
  margin-bottom: 6px;
  padding-left: 8px;
  color: #111;
}
aside a {
  display: flex;
  align-items: center;
  gap: 8px;
  height: 36px;
  padding-left: 4px;
  line-height: 15px;
  white-space: nowrap;
}
aside a svg {
  width: 25px;
  height: 24px;
}
aside .two {
  height: 40px;
}
aside .current {
  gap: 7px;
  padding-left: 8px;
  background: #f0f0f0;
  color: #111;
}
.pane {
  display: flex;
  flex: 1;
  flex-direction: column;
  min-width: 0;
  padding: 4px 4px 3px;
  font-size: 12px;
}
.renderer {
  height: 24px;
  padding-left: 7px;
}
.renderer svg {
  width: 14px;
  height: 15px;
  margin-right: 3px;
}
.symbol {
  display: flex;
  gap: 6px;
  padding: 6px 0 8px;
  border-bottom: 1px solid #aaa;
}
.preview {
  display: flex;
  align-items: center;
  width: 126px;
  padding: 0 13px;
}
.preview span {
  flex: 1;
  height: 3px;
  background: red;
}
.sym-tree {
  flex: 1;
  height: 126px;
  margin-top: 2px;
  border: 1px solid #aaa;
  background: #fff;
}
.sym-tree li {
  display: flex;
  align-items: center;
  gap: 7px;
  height: 18px;
  padding-left: 6px;
}
.sym-tree li:first-child {
  background: #f0f0f0;
}
.sym-tree .sub {
  padding-left: 43px;
}
.ln {
  width: 16px;
  height: 3px;
  background: red;
}
.ln.thin {
  height: 1px;
  margin-left: 2px;
  background: #e88;
}
.sym-btns {
  display: grid;
  grid-template-columns: 28px 28px;
  grid-auto-rows: 24px;
  gap: 4px 6px;
}
.sym-btns button, .push, .color, .color-dd {
  border: 1px solid #aaa;
  border-radius: 3px;
  background: linear-gradient(#fff, #f0f0f0);
}
.sym-btns svg {
  width: 15px;
  height: 15px;
}
.sym-btns button:disabled {
  border-color: #ccc;
}
.sym-btns button:disabled svg {
  opacity: 0.6;
}
.props {
  display: flex;
  flex-direction: column;
  gap: 9px;
  padding: 8px 9px 7px 0;
  border-bottom: 1px solid #aaa;
}
.row {
  display: flex;
  align-items: center;
  height: 22px;
}
.row label {
  width: 54px;
}
.color {
  flex: 1;
  height: 22px;
  padding: 2px 4px;
}
.color span {
  flex: 1;
  height: 16px;
  border-radius: 2px;
  background: red;
}
.color-dd {
  width: 12px;
  height: 22px;
}
.row .spin {
  height: 20px;
  padding-left: 4px;
}
.row .combo {
  height: 22px;
  padding-left: 4px;
}
.pct {
  width: 100px;
}
.wide {
  flex: 1;
}
.spin.wide {
  margin-right: 6px;
}
.ddef {
  width: 36px;
  padding-left: 4px;
}
.ddef svg {
  width: 24px;
  height: 18px;
}
.filter {
  display: flex;
  gap: 6px;
  padding: 5px 9px 5px 0;
}
.filter .field {
  flex: 1;
  height: 22px;
  padding-left: 10px;
}
.filter .field > svg {
  margin-right: 7px;
}
.filter .dd {
  align-self: stretch;
  width: 20px;
  margin-left: 8px;
  border-left: 1px solid #aaa;
}
.stylemgr {
  width: 24px;
}
.stylemgr svg {
  width: 15px;
  height: 15px;
}
.gallery {
  flex: 1;
  min-height: 0;
  margin-right: 9px;
  overflow: hidden;
}
.gallery ul {
  display: grid;
  flex: 1;
  grid-template-columns: repeat(4, minmax(0, 168px));
  grid-auto-rows: 183px;
  text-align: center;
  line-height: 16px;
}
.gallery li svg {
  display: block;
  width: 100%;
  height: 110px;
}
.viewrow {
  display: flex;
  gap: 6px;
  padding: 6px 9px 0 0;
  height: 48px;
}
.view {
  width: 20px;
  height: 23px;
  border-radius: 3px;
}
.view.on {
  width: 24px;
  margin-right: -4px;
  border: 1px solid #aaa;
  background: #ddd;
}
.view svg {
  width: 14px;
  height: 14px;
}
.push {
  width: 80px;
  height: 20px;
}
.push.first {
  margin-left: auto;
}
.viewrow .push {
  margin-top: 1px;
}
.push.menu {
  justify-content: flex-end;
  gap: 18px;
  padding-right: 4px;
}
.push .tri.open {
  border-width: 4px 3px 0;
}
.pane h3 {
  display: flex;
  align-items: center;
  gap: 10px;
  height: 20px;
  margin-bottom: 6px;
  padding-left: 5px;
  font-weight: bold;
}
.pane h3 .tri {
  border-width: 5px 0 5px 7px;
}
.actions {
  display: flex;
  gap: 6px;
}

/* tutorial steps */
.step {
  position: absolute;
  color: #0015ff;
  font-size: 34px;
  font-weight: 900;
  line-height: 36px;
  white-space: nowrap;
  -webkit-text-stroke: 1px #0015ff;
  text-shadow: 3px 0 #fff, -3px 0 #fff, 0 3px #fff, 0 -3px #fff, 2px 2px #fff, -2px 2px #fff, 2px -2px #fff, -2px -2px #fff;
}
.s1 { left: 165px; top: 444px; }
.s2 { left: 376px; top: 228px; }
.s3 { left: 685px; top: 139px; }
.s4 { left: 847px; top: 301px; }
.s5 { left: 681px; top: 390px; }
.s6 { left: 948px; top: 915px; }
```
